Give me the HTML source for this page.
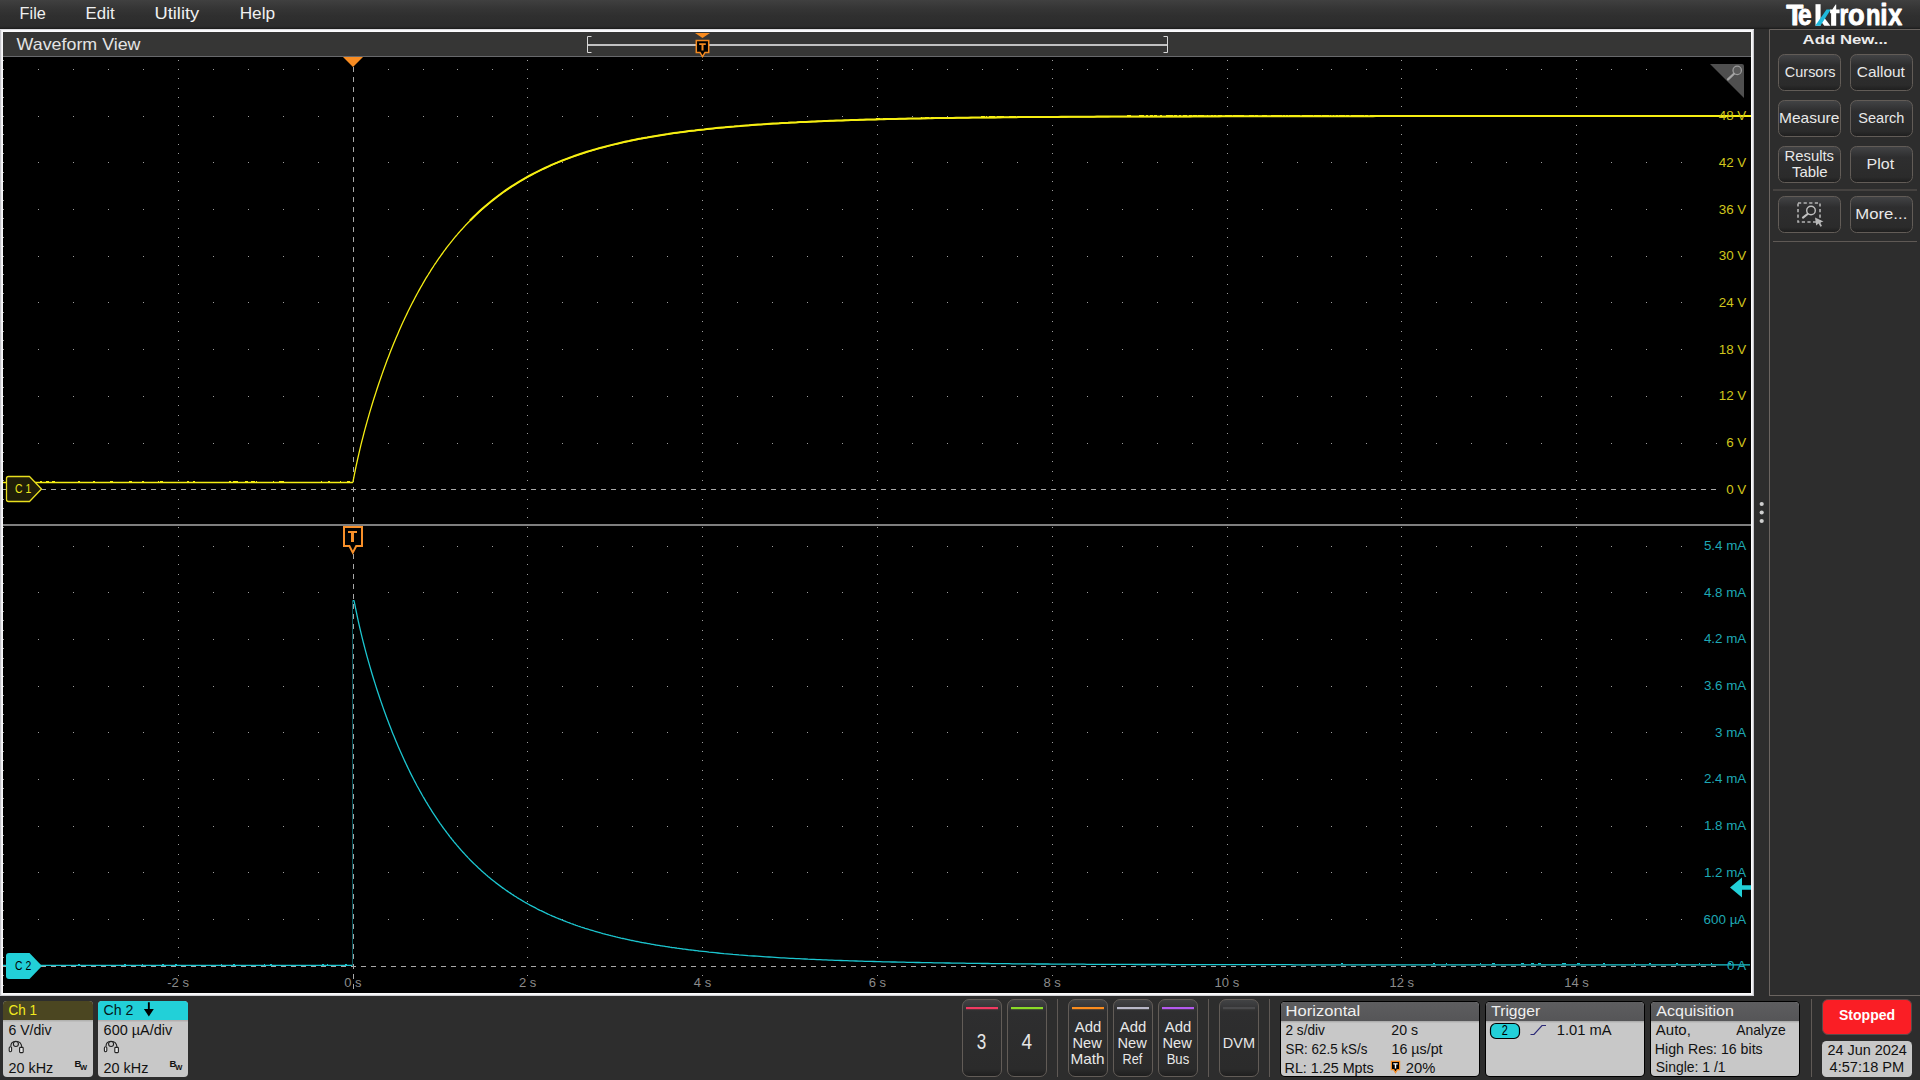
<!DOCTYPE html>
<html><head><meta charset="utf-8"><title>Tektronix Oscilloscope</title>
<style>
html,body{margin:0;padding:0;background:#2d2d2d;}
body{width:1920px;height:1080px;overflow:hidden;position:relative;font-family:"Liberation Sans", sans-serif;}
svg{position:absolute;left:0;top:0;display:block}
text{font-family:"Liberation Sans", sans-serif;white-space:pre}
</style></head><body>
<svg width="1920" height="1080" viewBox="0 0 1920 1080">
<defs>
<linearGradient id="gMenu" x1="0" y1="0" x2="0" y2="1"><stop offset="0" stop-color="#404040"/><stop offset="0.3" stop-color="#353535"/><stop offset="0.55" stop-color="#2f2f2f"/><stop offset="0.9" stop-color="#2d2d2d"/><stop offset="0.96" stop-color="#242424"/><stop offset="1" stop-color="#1a1a1a"/></linearGradient>
<linearGradient id="gBtn" x1="0" y1="0" x2="0" y2="1"><stop offset="0" stop-color="#434446"/><stop offset="0.3" stop-color="#2e2e2f"/><stop offset="0.85" stop-color="#2b2b2b"/><stop offset="1" stop-color="#1e1e1e"/></linearGradient>
<linearGradient id="gBtnT" x1="0" y1="0" x2="0" y2="1"><stop offset="0" stop-color="#434446"/><stop offset="0.16" stop-color="#2e2e2f"/><stop offset="0.9" stop-color="#2b2b2b"/><stop offset="1" stop-color="#1e1e1e"/></linearGradient>
<linearGradient id="gHdr" x1="0" y1="0" x2="0" y2="1"><stop offset="0" stop-color="#5e5e60"/><stop offset="1" stop-color="#555557"/></linearGradient>
<linearGradient id="gBordH" x1="0" y1="0" x2="0" y2="1"><stop offset="0" stop-color="#c9c9cc"/><stop offset="0.34" stop-color="#f4f4f7"/><stop offset="1" stop-color="#ffffff"/></linearGradient>
<linearGradient id="gBordHB" x1="0" y1="0" x2="0" y2="1"><stop offset="0" stop-color="#ffffff"/><stop offset="0.66" stop-color="#f0f0f3"/><stop offset="1" stop-color="#b4b4b8"/></linearGradient>
<linearGradient id="gBordL" x1="0" y1="0" x2="1" y2="0"><stop offset="0" stop-color="#a8a8ad"/><stop offset="0.34" stop-color="#e8e8ec"/><stop offset="1" stop-color="#ffffff"/></linearGradient>
<linearGradient id="gBordR" x1="0" y1="0" x2="1" y2="0"><stop offset="0" stop-color="#ffffff"/><stop offset="0.66" stop-color="#e8e8ec"/><stop offset="1" stop-color="#a8a8ad"/></linearGradient>
<clipPath id="cpPlot"><rect x="3" y="57" width="1748" height="936"/></clipPath>
</defs>

<rect x="0" y="0" width="1920" height="1080" fill="#2d2d2d"/>
<rect x="0" y="0" width="1920" height="29" fill="url(#gMenu)"/>
<text x="19.62" y="19" font-size="16.5" fill="#f0f0f0" text-anchor="start" font-weight="normal" textLength="26.2" lengthAdjust="spacingAndGlyphs">File</text>
<text x="85.58" y="19" font-size="16.5" fill="#f0f0f0" text-anchor="start" font-weight="normal" textLength="29.0" lengthAdjust="spacingAndGlyphs">Edit</text>
<text x="154.49" y="19" font-size="16.5" fill="#f0f0f0" text-anchor="start" font-weight="normal" textLength="44.7" lengthAdjust="spacingAndGlyphs">Utility</text>
<text x="239.65" y="19" font-size="16.5" fill="#f0f0f0" text-anchor="start" font-weight="normal" textLength="35.5" lengthAdjust="spacingAndGlyphs">Help</text>
<rect x="0" y="29" width="1754" height="967" fill="#fff"/>
<rect x="0" y="29" width="1754" height="3" fill="url(#gBordH)"/>
<rect x="0" y="993" width="1754" height="3" fill="url(#gBordHB)"/>
<rect x="0" y="30" width="3" height="965" fill="url(#gBordL)"/>
<rect x="1751" y="30" width="3" height="965" fill="url(#gBordR)"/>
<rect x="3" y="32" width="1748" height="24" fill="#363635"/>
<rect x="3" y="56" width="1748" height="1" fill="#68696c"/>
<rect x="3" y="57" width="1748" height="936" fill="#000"/>
<text x="16.6" y="50" font-size="17" fill="#e4e4e4" text-anchor="start" font-weight="normal" textLength="123.9" lengthAdjust="spacingAndGlyphs">Waveform View</text>
<path d="M591.5 36.5H587.5V52.5H591.5M1163.5 36.5H1167.5V52.5H1163.5" fill="none" stroke="#d8d8d8" stroke-width="1"/>
<rect x="588" y="44" width="579" height="2" fill="#c2c2c2"/>
<path d="M695 33H710L702.5 38Z" fill="#fa8c1e"/>
<path d="M696.3 40.5H708.7V52.4H705L702.5 56.6L700 52.4H696.3Z" fill="#000" stroke="#f58a1f" stroke-width="1.5" stroke-linejoin="miter"/>
<path d="M699.2 43.2H705.8V45H703.5V50.6H701.5V45H699.2Z" fill="#f58a1f"/>
<path clip-path="url(#cpPlot)" shape-rendering="crispEdges" stroke="#9e9e9e" stroke-width="1" fill="none" d="M3 517.5h1M178 517.5h1M527 517.5h1M702 517.5h1M877 517.5h1M1052 517.5h1M1227 517.5h1M1401 517.5h1M1576 517.5h1M3 508.5h1M178 508.5h1M527 508.5h1M702 508.5h1M877 508.5h1M1052 508.5h1M1227 508.5h1M1401 508.5h1M1576 508.5h1M3 499.5h1M178 499.5h1M527 499.5h1M702 499.5h1M877 499.5h1M1052 499.5h1M1227 499.5h1M1401 499.5h1M1576 499.5h1M3 489.5h1M3 480.5h1M178 480.5h1M527 480.5h1M702 480.5h1M877 480.5h1M1052 480.5h1M1227 480.5h1M1401 480.5h1M1576 480.5h1M3 471.5h1M178 471.5h1M527 471.5h1M702 471.5h1M877 471.5h1M1052 471.5h1M1227 471.5h1M1401 471.5h1M1576 471.5h1M3 461.5h1M178 461.5h1M527 461.5h1M702 461.5h1M877 461.5h1M1052 461.5h1M1227 461.5h1M1401 461.5h1M1576 461.5h1M3 452.5h1M178 452.5h1M527 452.5h1M702 452.5h1M877 452.5h1M1052 452.5h1M1227 452.5h1M1401 452.5h1M1576 452.5h1M3 443.5h1M178 443.5h1M527 443.5h1M702 443.5h1M877 443.5h1M1052 443.5h1M1227 443.5h1M1401 443.5h1M1576 443.5h1M38 443.5h1M73 443.5h1M108 443.5h1M143 443.5h1M213 443.5h1M248 443.5h1M283 443.5h1M318 443.5h1M388 443.5h1M423 443.5h1M457 443.5h1M492 443.5h1M562 443.5h1M597 443.5h1M632 443.5h1M667 443.5h1M737 443.5h1M772 443.5h1M807 443.5h1M842 443.5h1M912 443.5h1M947 443.5h1M982 443.5h1M1017 443.5h1M1087 443.5h1M1122 443.5h1M1157 443.5h1M1192 443.5h1M1262 443.5h1M1297 443.5h1M1331 443.5h1M1366 443.5h1M1436 443.5h1M1471 443.5h1M1506 443.5h1M1541 443.5h1M1611 443.5h1M1646 443.5h1M1681 443.5h1M1716 443.5h1M3 433.5h1M178 433.5h1M527 433.5h1M702 433.5h1M877 433.5h1M1052 433.5h1M1227 433.5h1M1401 433.5h1M1576 433.5h1M3 424.5h1M178 424.5h1M527 424.5h1M702 424.5h1M877 424.5h1M1052 424.5h1M1227 424.5h1M1401 424.5h1M1576 424.5h1M3 415.5h1M178 415.5h1M527 415.5h1M702 415.5h1M877 415.5h1M1052 415.5h1M1227 415.5h1M1401 415.5h1M1576 415.5h1M3 405.5h1M178 405.5h1M527 405.5h1M702 405.5h1M877 405.5h1M1052 405.5h1M1227 405.5h1M1401 405.5h1M1576 405.5h1M3 396.5h1M178 396.5h1M527 396.5h1M702 396.5h1M877 396.5h1M1052 396.5h1M1227 396.5h1M1401 396.5h1M1576 396.5h1M38 396.5h1M73 396.5h1M108 396.5h1M143 396.5h1M213 396.5h1M248 396.5h1M283 396.5h1M318 396.5h1M388 396.5h1M423 396.5h1M457 396.5h1M492 396.5h1M562 396.5h1M597 396.5h1M632 396.5h1M667 396.5h1M737 396.5h1M772 396.5h1M807 396.5h1M842 396.5h1M912 396.5h1M947 396.5h1M982 396.5h1M1017 396.5h1M1087 396.5h1M1122 396.5h1M1157 396.5h1M1192 396.5h1M1262 396.5h1M1297 396.5h1M1331 396.5h1M1366 396.5h1M1436 396.5h1M1471 396.5h1M1506 396.5h1M1541 396.5h1M1611 396.5h1M1646 396.5h1M1681 396.5h1M1716 396.5h1M3 387.5h1M178 387.5h1M527 387.5h1M702 387.5h1M877 387.5h1M1052 387.5h1M1227 387.5h1M1401 387.5h1M1576 387.5h1M3 377.5h1M178 377.5h1M527 377.5h1M702 377.5h1M877 377.5h1M1052 377.5h1M1227 377.5h1M1401 377.5h1M1576 377.5h1M3 368.5h1M178 368.5h1M527 368.5h1M702 368.5h1M877 368.5h1M1052 368.5h1M1227 368.5h1M1401 368.5h1M1576 368.5h1M3 359.5h1M178 359.5h1M527 359.5h1M702 359.5h1M877 359.5h1M1052 359.5h1M1227 359.5h1M1401 359.5h1M1576 359.5h1M3 349.5h1M178 349.5h1M527 349.5h1M702 349.5h1M877 349.5h1M1052 349.5h1M1227 349.5h1M1401 349.5h1M1576 349.5h1M38 349.5h1M73 349.5h1M108 349.5h1M143 349.5h1M213 349.5h1M248 349.5h1M283 349.5h1M318 349.5h1M388 349.5h1M423 349.5h1M457 349.5h1M492 349.5h1M562 349.5h1M597 349.5h1M632 349.5h1M667 349.5h1M737 349.5h1M772 349.5h1M807 349.5h1M842 349.5h1M912 349.5h1M947 349.5h1M982 349.5h1M1017 349.5h1M1087 349.5h1M1122 349.5h1M1157 349.5h1M1192 349.5h1M1262 349.5h1M1297 349.5h1M1331 349.5h1M1366 349.5h1M1436 349.5h1M1471 349.5h1M1506 349.5h1M1541 349.5h1M1611 349.5h1M1646 349.5h1M1681 349.5h1M1716 349.5h1M3 340.5h1M178 340.5h1M527 340.5h1M702 340.5h1M877 340.5h1M1052 340.5h1M1227 340.5h1M1401 340.5h1M1576 340.5h1M3 331.5h1M178 331.5h1M527 331.5h1M702 331.5h1M877 331.5h1M1052 331.5h1M1227 331.5h1M1401 331.5h1M1576 331.5h1M3 321.5h1M178 321.5h1M527 321.5h1M702 321.5h1M877 321.5h1M1052 321.5h1M1227 321.5h1M1401 321.5h1M1576 321.5h1M3 312.5h1M178 312.5h1M527 312.5h1M702 312.5h1M877 312.5h1M1052 312.5h1M1227 312.5h1M1401 312.5h1M1576 312.5h1M3 302.5h1M178 302.5h1M527 302.5h1M702 302.5h1M877 302.5h1M1052 302.5h1M1227 302.5h1M1401 302.5h1M1576 302.5h1M38 302.5h1M73 302.5h1M108 302.5h1M143 302.5h1M213 302.5h1M248 302.5h1M283 302.5h1M318 302.5h1M388 302.5h1M423 302.5h1M457 302.5h1M492 302.5h1M562 302.5h1M597 302.5h1M632 302.5h1M667 302.5h1M737 302.5h1M772 302.5h1M807 302.5h1M842 302.5h1M912 302.5h1M947 302.5h1M982 302.5h1M1017 302.5h1M1087 302.5h1M1122 302.5h1M1157 302.5h1M1192 302.5h1M1262 302.5h1M1297 302.5h1M1331 302.5h1M1366 302.5h1M1436 302.5h1M1471 302.5h1M1506 302.5h1M1541 302.5h1M1611 302.5h1M1646 302.5h1M1681 302.5h1M1716 302.5h1M3 293.5h1M178 293.5h1M527 293.5h1M702 293.5h1M877 293.5h1M1052 293.5h1M1227 293.5h1M1401 293.5h1M1576 293.5h1M3 284.5h1M178 284.5h1M527 284.5h1M702 284.5h1M877 284.5h1M1052 284.5h1M1227 284.5h1M1401 284.5h1M1576 284.5h1M3 274.5h1M178 274.5h1M527 274.5h1M702 274.5h1M877 274.5h1M1052 274.5h1M1227 274.5h1M1401 274.5h1M1576 274.5h1M3 265.5h1M178 265.5h1M527 265.5h1M702 265.5h1M877 265.5h1M1052 265.5h1M1227 265.5h1M1401 265.5h1M1576 265.5h1M3 256.5h1M178 256.5h1M527 256.5h1M702 256.5h1M877 256.5h1M1052 256.5h1M1227 256.5h1M1401 256.5h1M1576 256.5h1M38 256.5h1M73 256.5h1M108 256.5h1M143 256.5h1M213 256.5h1M248 256.5h1M283 256.5h1M318 256.5h1M388 256.5h1M423 256.5h1M457 256.5h1M492 256.5h1M562 256.5h1M597 256.5h1M632 256.5h1M667 256.5h1M737 256.5h1M772 256.5h1M807 256.5h1M842 256.5h1M912 256.5h1M947 256.5h1M982 256.5h1M1017 256.5h1M1087 256.5h1M1122 256.5h1M1157 256.5h1M1192 256.5h1M1262 256.5h1M1297 256.5h1M1331 256.5h1M1366 256.5h1M1436 256.5h1M1471 256.5h1M1506 256.5h1M1541 256.5h1M1611 256.5h1M1646 256.5h1M1681 256.5h1M1716 256.5h1M3 246.5h1M178 246.5h1M527 246.5h1M702 246.5h1M877 246.5h1M1052 246.5h1M1227 246.5h1M1401 246.5h1M1576 246.5h1M3 237.5h1M178 237.5h1M527 237.5h1M702 237.5h1M877 237.5h1M1052 237.5h1M1227 237.5h1M1401 237.5h1M1576 237.5h1M3 228.5h1M178 228.5h1M527 228.5h1M702 228.5h1M877 228.5h1M1052 228.5h1M1227 228.5h1M1401 228.5h1M1576 228.5h1M3 218.5h1M178 218.5h1M527 218.5h1M702 218.5h1M877 218.5h1M1052 218.5h1M1227 218.5h1M1401 218.5h1M1576 218.5h1M3 209.5h1M178 209.5h1M527 209.5h1M702 209.5h1M877 209.5h1M1052 209.5h1M1227 209.5h1M1401 209.5h1M1576 209.5h1M38 209.5h1M73 209.5h1M108 209.5h1M143 209.5h1M213 209.5h1M248 209.5h1M283 209.5h1M318 209.5h1M388 209.5h1M423 209.5h1M457 209.5h1M492 209.5h1M562 209.5h1M597 209.5h1M632 209.5h1M667 209.5h1M737 209.5h1M772 209.5h1M807 209.5h1M842 209.5h1M912 209.5h1M947 209.5h1M982 209.5h1M1017 209.5h1M1087 209.5h1M1122 209.5h1M1157 209.5h1M1192 209.5h1M1262 209.5h1M1297 209.5h1M1331 209.5h1M1366 209.5h1M1436 209.5h1M1471 209.5h1M1506 209.5h1M1541 209.5h1M1611 209.5h1M1646 209.5h1M1681 209.5h1M1716 209.5h1M3 200.5h1M178 200.5h1M527 200.5h1M702 200.5h1M877 200.5h1M1052 200.5h1M1227 200.5h1M1401 200.5h1M1576 200.5h1M3 190.5h1M178 190.5h1M527 190.5h1M702 190.5h1M877 190.5h1M1052 190.5h1M1227 190.5h1M1401 190.5h1M1576 190.5h1M3 181.5h1M178 181.5h1M527 181.5h1M702 181.5h1M877 181.5h1M1052 181.5h1M1227 181.5h1M1401 181.5h1M1576 181.5h1M3 172.5h1M178 172.5h1M527 172.5h1M702 172.5h1M877 172.5h1M1052 172.5h1M1227 172.5h1M1401 172.5h1M1576 172.5h1M3 162.5h1M178 162.5h1M527 162.5h1M702 162.5h1M877 162.5h1M1052 162.5h1M1227 162.5h1M1401 162.5h1M1576 162.5h1M38 162.5h1M73 162.5h1M108 162.5h1M143 162.5h1M213 162.5h1M248 162.5h1M283 162.5h1M318 162.5h1M388 162.5h1M423 162.5h1M457 162.5h1M492 162.5h1M562 162.5h1M597 162.5h1M632 162.5h1M667 162.5h1M737 162.5h1M772 162.5h1M807 162.5h1M842 162.5h1M912 162.5h1M947 162.5h1M982 162.5h1M1017 162.5h1M1087 162.5h1M1122 162.5h1M1157 162.5h1M1192 162.5h1M1262 162.5h1M1297 162.5h1M1331 162.5h1M1366 162.5h1M1436 162.5h1M1471 162.5h1M1506 162.5h1M1541 162.5h1M1611 162.5h1M1646 162.5h1M1681 162.5h1M1716 162.5h1M3 153.5h1M178 153.5h1M527 153.5h1M702 153.5h1M877 153.5h1M1052 153.5h1M1227 153.5h1M1401 153.5h1M1576 153.5h1M3 144.5h1M178 144.5h1M527 144.5h1M702 144.5h1M877 144.5h1M1052 144.5h1M1227 144.5h1M1401 144.5h1M1576 144.5h1M3 134.5h1M178 134.5h1M527 134.5h1M702 134.5h1M877 134.5h1M1052 134.5h1M1227 134.5h1M1401 134.5h1M1576 134.5h1M3 125.5h1M178 125.5h1M527 125.5h1M702 125.5h1M877 125.5h1M1052 125.5h1M1227 125.5h1M1401 125.5h1M1576 125.5h1M3 116.5h1M178 116.5h1M527 116.5h1M702 116.5h1M877 116.5h1M1052 116.5h1M1227 116.5h1M1401 116.5h1M1576 116.5h1M38 116.5h1M73 116.5h1M108 116.5h1M143 116.5h1M213 116.5h1M248 116.5h1M283 116.5h1M318 116.5h1M388 116.5h1M423 116.5h1M457 116.5h1M492 116.5h1M562 116.5h1M597 116.5h1M632 116.5h1M667 116.5h1M737 116.5h1M772 116.5h1M807 116.5h1M842 116.5h1M912 116.5h1M947 116.5h1M982 116.5h1M1017 116.5h1M1087 116.5h1M1122 116.5h1M1157 116.5h1M1192 116.5h1M1262 116.5h1M1297 116.5h1M1331 116.5h1M1366 116.5h1M1436 116.5h1M1471 116.5h1M1506 116.5h1M1541 116.5h1M1611 116.5h1M1646 116.5h1M1681 116.5h1M1716 116.5h1M3 106.5h1M178 106.5h1M527 106.5h1M702 106.5h1M877 106.5h1M1052 106.5h1M1227 106.5h1M1401 106.5h1M1576 106.5h1M3 97.5h1M178 97.5h1M527 97.5h1M702 97.5h1M877 97.5h1M1052 97.5h1M1227 97.5h1M1401 97.5h1M1576 97.5h1M3 88.5h1M178 88.5h1M527 88.5h1M702 88.5h1M877 88.5h1M1052 88.5h1M1227 88.5h1M1401 88.5h1M1576 88.5h1M3 78.5h1M178 78.5h1M527 78.5h1M702 78.5h1M877 78.5h1M1052 78.5h1M1227 78.5h1M1401 78.5h1M1576 78.5h1M3 69.5h1M178 69.5h1M527 69.5h1M702 69.5h1M877 69.5h1M1052 69.5h1M1227 69.5h1M1401 69.5h1M1576 69.5h1M38 69.5h1M73 69.5h1M108 69.5h1M143 69.5h1M213 69.5h1M248 69.5h1M283 69.5h1M318 69.5h1M388 69.5h1M423 69.5h1M457 69.5h1M492 69.5h1M562 69.5h1M597 69.5h1M632 69.5h1M667 69.5h1M737 69.5h1M772 69.5h1M807 69.5h1M842 69.5h1M912 69.5h1M947 69.5h1M982 69.5h1M1017 69.5h1M1087 69.5h1M1122 69.5h1M1157 69.5h1M1192 69.5h1M1262 69.5h1M1297 69.5h1M1331 69.5h1M1366 69.5h1M1436 69.5h1M1471 69.5h1M1506 69.5h1M1541 69.5h1M1611 69.5h1M1646 69.5h1M1681 69.5h1M1716 69.5h1M3 60.5h1M178 60.5h1M527 60.5h1M702 60.5h1M877 60.5h1M1052 60.5h1M1227 60.5h1M1401 60.5h1M1576 60.5h1M3 985.5h1M178 985.5h1M527 985.5h1M702 985.5h1M877 985.5h1M1052 985.5h1M1227 985.5h1M1401 985.5h1M1576 985.5h1M3 975.5h1M178 975.5h1M527 975.5h1M702 975.5h1M877 975.5h1M1052 975.5h1M1227 975.5h1M1401 975.5h1M1576 975.5h1M3 966.5h1M3 957.5h1M178 957.5h1M527 957.5h1M702 957.5h1M877 957.5h1M1052 957.5h1M1227 957.5h1M1401 957.5h1M1576 957.5h1M3 947.5h1M178 947.5h1M527 947.5h1M702 947.5h1M877 947.5h1M1052 947.5h1M1227 947.5h1M1401 947.5h1M1576 947.5h1M3 938.5h1M178 938.5h1M527 938.5h1M702 938.5h1M877 938.5h1M1052 938.5h1M1227 938.5h1M1401 938.5h1M1576 938.5h1M3 929.5h1M178 929.5h1M527 929.5h1M702 929.5h1M877 929.5h1M1052 929.5h1M1227 929.5h1M1401 929.5h1M1576 929.5h1M3 919.5h1M178 919.5h1M527 919.5h1M702 919.5h1M877 919.5h1M1052 919.5h1M1227 919.5h1M1401 919.5h1M1576 919.5h1M38 919.5h1M73 919.5h1M108 919.5h1M143 919.5h1M213 919.5h1M248 919.5h1M283 919.5h1M318 919.5h1M388 919.5h1M423 919.5h1M457 919.5h1M492 919.5h1M562 919.5h1M597 919.5h1M632 919.5h1M667 919.5h1M737 919.5h1M772 919.5h1M807 919.5h1M842 919.5h1M912 919.5h1M947 919.5h1M982 919.5h1M1017 919.5h1M1087 919.5h1M1122 919.5h1M1157 919.5h1M1192 919.5h1M1262 919.5h1M1297 919.5h1M1331 919.5h1M1366 919.5h1M1436 919.5h1M1471 919.5h1M1506 919.5h1M1541 919.5h1M1611 919.5h1M1646 919.5h1M1681 919.5h1M1716 919.5h1M3 910.5h1M178 910.5h1M527 910.5h1M702 910.5h1M877 910.5h1M1052 910.5h1M1227 910.5h1M1401 910.5h1M1576 910.5h1M3 901.5h1M178 901.5h1M527 901.5h1M702 901.5h1M877 901.5h1M1052 901.5h1M1227 901.5h1M1401 901.5h1M1576 901.5h1M3 891.5h1M178 891.5h1M527 891.5h1M702 891.5h1M877 891.5h1M1052 891.5h1M1227 891.5h1M1401 891.5h1M1576 891.5h1M3 882.5h1M178 882.5h1M527 882.5h1M702 882.5h1M877 882.5h1M1052 882.5h1M1227 882.5h1M1401 882.5h1M1576 882.5h1M3 872.5h1M178 872.5h1M527 872.5h1M702 872.5h1M877 872.5h1M1052 872.5h1M1227 872.5h1M1401 872.5h1M1576 872.5h1M38 872.5h1M73 872.5h1M108 872.5h1M143 872.5h1M213 872.5h1M248 872.5h1M283 872.5h1M318 872.5h1M388 872.5h1M423 872.5h1M457 872.5h1M492 872.5h1M562 872.5h1M597 872.5h1M632 872.5h1M667 872.5h1M737 872.5h1M772 872.5h1M807 872.5h1M842 872.5h1M912 872.5h1M947 872.5h1M982 872.5h1M1017 872.5h1M1087 872.5h1M1122 872.5h1M1157 872.5h1M1192 872.5h1M1262 872.5h1M1297 872.5h1M1331 872.5h1M1366 872.5h1M1436 872.5h1M1471 872.5h1M1506 872.5h1M1541 872.5h1M1611 872.5h1M1646 872.5h1M1681 872.5h1M1716 872.5h1M3 863.5h1M178 863.5h1M527 863.5h1M702 863.5h1M877 863.5h1M1052 863.5h1M1227 863.5h1M1401 863.5h1M1576 863.5h1M3 854.5h1M178 854.5h1M527 854.5h1M702 854.5h1M877 854.5h1M1052 854.5h1M1227 854.5h1M1401 854.5h1M1576 854.5h1M3 844.5h1M178 844.5h1M527 844.5h1M702 844.5h1M877 844.5h1M1052 844.5h1M1227 844.5h1M1401 844.5h1M1576 844.5h1M3 835.5h1M178 835.5h1M527 835.5h1M702 835.5h1M877 835.5h1M1052 835.5h1M1227 835.5h1M1401 835.5h1M1576 835.5h1M3 826.5h1M178 826.5h1M527 826.5h1M702 826.5h1M877 826.5h1M1052 826.5h1M1227 826.5h1M1401 826.5h1M1576 826.5h1M38 826.5h1M73 826.5h1M108 826.5h1M143 826.5h1M213 826.5h1M248 826.5h1M283 826.5h1M318 826.5h1M388 826.5h1M423 826.5h1M457 826.5h1M492 826.5h1M562 826.5h1M597 826.5h1M632 826.5h1M667 826.5h1M737 826.5h1M772 826.5h1M807 826.5h1M842 826.5h1M912 826.5h1M947 826.5h1M982 826.5h1M1017 826.5h1M1087 826.5h1M1122 826.5h1M1157 826.5h1M1192 826.5h1M1262 826.5h1M1297 826.5h1M1331 826.5h1M1366 826.5h1M1436 826.5h1M1471 826.5h1M1506 826.5h1M1541 826.5h1M1611 826.5h1M1646 826.5h1M1681 826.5h1M1716 826.5h1M3 816.5h1M178 816.5h1M527 816.5h1M702 816.5h1M877 816.5h1M1052 816.5h1M1227 816.5h1M1401 816.5h1M1576 816.5h1M3 807.5h1M178 807.5h1M527 807.5h1M702 807.5h1M877 807.5h1M1052 807.5h1M1227 807.5h1M1401 807.5h1M1576 807.5h1M3 798.5h1M178 798.5h1M527 798.5h1M702 798.5h1M877 798.5h1M1052 798.5h1M1227 798.5h1M1401 798.5h1M1576 798.5h1M3 788.5h1M178 788.5h1M527 788.5h1M702 788.5h1M877 788.5h1M1052 788.5h1M1227 788.5h1M1401 788.5h1M1576 788.5h1M3 779.5h1M178 779.5h1M527 779.5h1M702 779.5h1M877 779.5h1M1052 779.5h1M1227 779.5h1M1401 779.5h1M1576 779.5h1M38 779.5h1M73 779.5h1M108 779.5h1M143 779.5h1M213 779.5h1M248 779.5h1M283 779.5h1M318 779.5h1M388 779.5h1M423 779.5h1M457 779.5h1M492 779.5h1M562 779.5h1M597 779.5h1M632 779.5h1M667 779.5h1M737 779.5h1M772 779.5h1M807 779.5h1M842 779.5h1M912 779.5h1M947 779.5h1M982 779.5h1M1017 779.5h1M1087 779.5h1M1122 779.5h1M1157 779.5h1M1192 779.5h1M1262 779.5h1M1297 779.5h1M1331 779.5h1M1366 779.5h1M1436 779.5h1M1471 779.5h1M1506 779.5h1M1541 779.5h1M1611 779.5h1M1646 779.5h1M1681 779.5h1M1716 779.5h1M3 770.5h1M178 770.5h1M527 770.5h1M702 770.5h1M877 770.5h1M1052 770.5h1M1227 770.5h1M1401 770.5h1M1576 770.5h1M3 760.5h1M178 760.5h1M527 760.5h1M702 760.5h1M877 760.5h1M1052 760.5h1M1227 760.5h1M1401 760.5h1M1576 760.5h1M3 751.5h1M178 751.5h1M527 751.5h1M702 751.5h1M877 751.5h1M1052 751.5h1M1227 751.5h1M1401 751.5h1M1576 751.5h1M3 742.5h1M178 742.5h1M527 742.5h1M702 742.5h1M877 742.5h1M1052 742.5h1M1227 742.5h1M1401 742.5h1M1576 742.5h1M3 732.5h1M178 732.5h1M527 732.5h1M702 732.5h1M877 732.5h1M1052 732.5h1M1227 732.5h1M1401 732.5h1M1576 732.5h1M38 732.5h1M73 732.5h1M108 732.5h1M143 732.5h1M213 732.5h1M248 732.5h1M283 732.5h1M318 732.5h1M388 732.5h1M423 732.5h1M457 732.5h1M492 732.5h1M562 732.5h1M597 732.5h1M632 732.5h1M667 732.5h1M737 732.5h1M772 732.5h1M807 732.5h1M842 732.5h1M912 732.5h1M947 732.5h1M982 732.5h1M1017 732.5h1M1087 732.5h1M1122 732.5h1M1157 732.5h1M1192 732.5h1M1262 732.5h1M1297 732.5h1M1331 732.5h1M1366 732.5h1M1436 732.5h1M1471 732.5h1M1506 732.5h1M1541 732.5h1M1611 732.5h1M1646 732.5h1M1681 732.5h1M1716 732.5h1M3 723.5h1M178 723.5h1M527 723.5h1M702 723.5h1M877 723.5h1M1052 723.5h1M1227 723.5h1M1401 723.5h1M1576 723.5h1M3 714.5h1M178 714.5h1M527 714.5h1M702 714.5h1M877 714.5h1M1052 714.5h1M1227 714.5h1M1401 714.5h1M1576 714.5h1M3 704.5h1M178 704.5h1M527 704.5h1M702 704.5h1M877 704.5h1M1052 704.5h1M1227 704.5h1M1401 704.5h1M1576 704.5h1M3 695.5h1M178 695.5h1M527 695.5h1M702 695.5h1M877 695.5h1M1052 695.5h1M1227 695.5h1M1401 695.5h1M1576 695.5h1M3 686.5h1M178 686.5h1M527 686.5h1M702 686.5h1M877 686.5h1M1052 686.5h1M1227 686.5h1M1401 686.5h1M1576 686.5h1M38 686.5h1M73 686.5h1M108 686.5h1M143 686.5h1M213 686.5h1M248 686.5h1M283 686.5h1M318 686.5h1M388 686.5h1M423 686.5h1M457 686.5h1M492 686.5h1M562 686.5h1M597 686.5h1M632 686.5h1M667 686.5h1M737 686.5h1M772 686.5h1M807 686.5h1M842 686.5h1M912 686.5h1M947 686.5h1M982 686.5h1M1017 686.5h1M1087 686.5h1M1122 686.5h1M1157 686.5h1M1192 686.5h1M1262 686.5h1M1297 686.5h1M1331 686.5h1M1366 686.5h1M1436 686.5h1M1471 686.5h1M1506 686.5h1M1541 686.5h1M1611 686.5h1M1646 686.5h1M1681 686.5h1M1716 686.5h1M3 676.5h1M178 676.5h1M527 676.5h1M702 676.5h1M877 676.5h1M1052 676.5h1M1227 676.5h1M1401 676.5h1M1576 676.5h1M3 667.5h1M178 667.5h1M527 667.5h1M702 667.5h1M877 667.5h1M1052 667.5h1M1227 667.5h1M1401 667.5h1M1576 667.5h1M3 658.5h1M178 658.5h1M527 658.5h1M702 658.5h1M877 658.5h1M1052 658.5h1M1227 658.5h1M1401 658.5h1M1576 658.5h1M3 648.5h1M178 648.5h1M527 648.5h1M702 648.5h1M877 648.5h1M1052 648.5h1M1227 648.5h1M1401 648.5h1M1576 648.5h1M3 639.5h1M178 639.5h1M527 639.5h1M702 639.5h1M877 639.5h1M1052 639.5h1M1227 639.5h1M1401 639.5h1M1576 639.5h1M38 639.5h1M73 639.5h1M108 639.5h1M143 639.5h1M213 639.5h1M248 639.5h1M283 639.5h1M318 639.5h1M388 639.5h1M423 639.5h1M457 639.5h1M492 639.5h1M562 639.5h1M597 639.5h1M632 639.5h1M667 639.5h1M737 639.5h1M772 639.5h1M807 639.5h1M842 639.5h1M912 639.5h1M947 639.5h1M982 639.5h1M1017 639.5h1M1087 639.5h1M1122 639.5h1M1157 639.5h1M1192 639.5h1M1262 639.5h1M1297 639.5h1M1331 639.5h1M1366 639.5h1M1436 639.5h1M1471 639.5h1M1506 639.5h1M1541 639.5h1M1611 639.5h1M1646 639.5h1M1681 639.5h1M1716 639.5h1M3 630.5h1M178 630.5h1M527 630.5h1M702 630.5h1M877 630.5h1M1052 630.5h1M1227 630.5h1M1401 630.5h1M1576 630.5h1M3 620.5h1M178 620.5h1M527 620.5h1M702 620.5h1M877 620.5h1M1052 620.5h1M1227 620.5h1M1401 620.5h1M1576 620.5h1M3 611.5h1M178 611.5h1M527 611.5h1M702 611.5h1M877 611.5h1M1052 611.5h1M1227 611.5h1M1401 611.5h1M1576 611.5h1M3 602.5h1M178 602.5h1M527 602.5h1M702 602.5h1M877 602.5h1M1052 602.5h1M1227 602.5h1M1401 602.5h1M1576 602.5h1M3 592.5h1M178 592.5h1M527 592.5h1M702 592.5h1M877 592.5h1M1052 592.5h1M1227 592.5h1M1401 592.5h1M1576 592.5h1M38 592.5h1M73 592.5h1M108 592.5h1M143 592.5h1M213 592.5h1M248 592.5h1M283 592.5h1M318 592.5h1M388 592.5h1M423 592.5h1M457 592.5h1M492 592.5h1M562 592.5h1M597 592.5h1M632 592.5h1M667 592.5h1M737 592.5h1M772 592.5h1M807 592.5h1M842 592.5h1M912 592.5h1M947 592.5h1M982 592.5h1M1017 592.5h1M1087 592.5h1M1122 592.5h1M1157 592.5h1M1192 592.5h1M1262 592.5h1M1297 592.5h1M1331 592.5h1M1366 592.5h1M1436 592.5h1M1471 592.5h1M1506 592.5h1M1541 592.5h1M1611 592.5h1M1646 592.5h1M1681 592.5h1M1716 592.5h1M3 583.5h1M178 583.5h1M527 583.5h1M702 583.5h1M877 583.5h1M1052 583.5h1M1227 583.5h1M1401 583.5h1M1576 583.5h1M3 574.5h1M178 574.5h1M527 574.5h1M702 574.5h1M877 574.5h1M1052 574.5h1M1227 574.5h1M1401 574.5h1M1576 574.5h1M3 564.5h1M178 564.5h1M527 564.5h1M702 564.5h1M877 564.5h1M1052 564.5h1M1227 564.5h1M1401 564.5h1M1576 564.5h1M3 555.5h1M178 555.5h1M527 555.5h1M702 555.5h1M877 555.5h1M1052 555.5h1M1227 555.5h1M1401 555.5h1M1576 555.5h1M3 546.5h1M178 546.5h1M527 546.5h1M702 546.5h1M877 546.5h1M1052 546.5h1M1227 546.5h1M1401 546.5h1M1576 546.5h1M38 546.5h1M73 546.5h1M108 546.5h1M143 546.5h1M213 546.5h1M248 546.5h1M283 546.5h1M318 546.5h1M388 546.5h1M423 546.5h1M457 546.5h1M492 546.5h1M562 546.5h1M597 546.5h1M632 546.5h1M667 546.5h1M737 546.5h1M772 546.5h1M807 546.5h1M842 546.5h1M912 546.5h1M947 546.5h1M982 546.5h1M1017 546.5h1M1087 546.5h1M1122 546.5h1M1157 546.5h1M1192 546.5h1M1262 546.5h1M1297 546.5h1M1331 546.5h1M1366 546.5h1M1436 546.5h1M1471 546.5h1M1506 546.5h1M1541 546.5h1M1611 546.5h1M1646 546.5h1M1681 546.5h1M1716 546.5h1M3 536.5h1M178 536.5h1M527 536.5h1M702 536.5h1M877 536.5h1M1052 536.5h1M1227 536.5h1M1401 536.5h1M1576 536.5h1M3 527.5h1M178 527.5h1M527 527.5h1M702 527.5h1M877 527.5h1M1052 527.5h1M1227 527.5h1M1401 527.5h1M1576 527.5h1"/>
<rect x="1721.5" y="482.3" width="24.5" height="14" fill="#000"/>
<rect x="1721.5" y="435.6" width="24.5" height="14" fill="#000"/>
<rect x="1714.2" y="388.9" width="31.8" height="14" fill="#000"/>
<rect x="1714.2" y="342.2" width="31.8" height="14" fill="#000"/>
<rect x="1714.2" y="295.5" width="31.8" height="14" fill="#000"/>
<rect x="1714.2" y="248.8" width="31.8" height="14" fill="#000"/>
<rect x="1714.2" y="202.1" width="31.8" height="14" fill="#000"/>
<rect x="1714.2" y="155.4" width="31.8" height="14" fill="#000"/>
<rect x="1714.2" y="108.7" width="31.8" height="14" fill="#000"/>
<rect x="1721.0" y="958.9" width="25.0" height="14" fill="#000"/>
<rect x="1699.0" y="912.2" width="47.0" height="14" fill="#000"/>
<rect x="1699.0" y="865.5" width="47.0" height="14" fill="#000"/>
<rect x="1699.0" y="818.8" width="47.0" height="14" fill="#000"/>
<rect x="1699.0" y="772.1" width="47.0" height="14" fill="#000"/>
<rect x="1710.0" y="725.4" width="36.0" height="14" fill="#000"/>
<rect x="1699.0" y="678.7" width="47.0" height="14" fill="#000"/>
<rect x="1699.0" y="632.0" width="47.0" height="14" fill="#000"/>
<rect x="1699.0" y="585.3" width="47.0" height="14" fill="#000"/>
<rect x="1699.0" y="538.6" width="47.0" height="14" fill="#000"/>
<rect x="166.5" y="977" width="22.7" height="12" fill="#000"/>
<rect x="343.4" y="977" width="18.4" height="12" fill="#000"/>
<rect x="518.2" y="977" width="18.4" height="12" fill="#000"/>
<rect x="693.0" y="977" width="18.4" height="12" fill="#000"/>
<rect x="867.8" y="977" width="18.4" height="12" fill="#000"/>
<rect x="1042.6" y="977" width="18.4" height="12" fill="#000"/>
<rect x="1215.3" y="977" width="22.7" height="12" fill="#000"/>
<rect x="1390.1" y="977" width="22.7" height="12" fill="#000"/>
<rect x="1564.9" y="977" width="22.7" height="12" fill="#000"/>
<rect x="3" y="524" width="1748" height="2" fill="#7e7e7e"/>
<path shape-rendering="crispEdges" d="M1 489.5H1717" stroke="#a8a8a8" stroke-width="1" stroke-dasharray="5 5" fill="none" clip-path="url(#cpPlot)"/>
<path shape-rendering="crispEdges" d="M1 966.5H1717" stroke="#a8a8a8" stroke-width="1" stroke-dasharray="5 5" fill="none" clip-path="url(#cpPlot)"/>
<path shape-rendering="crispEdges" d="M353.5 67V524M353.5 554V990" stroke="#a8a8a8" stroke-width="1" stroke-dasharray="5 5" fill="none"/>
<path d="M3 482.5H352.6L353.0 481.7 354.0 476.5 355.0 471.5 356.0 466.7 357.0 462.0 358.0 457.5 359.0 453.1 360.0 448.9 361.0 444.7 362.0 440.7 363.0 436.8 364.0 432.9 365.0 429.2 366.0 425.5 367.0 421.9 368.0 418.3 369.0 414.9 370.0 411.4 371.0 408.1 372.0 404.8 373.0 401.5 374.0 398.3 375.0 395.2 376.0 392.1 377.0 389.0 378.0 386.0 379.0 383.0 380.0 380.1 381.0 377.2 382.0 374.4 383.0 371.5 384.0 368.8 385.0 366.0 386.0 363.3 387.0 360.6 388.0 358.0 389.0 355.4 390.0 352.8 391.0 350.3 392.0 347.8 393.0 345.3 394.0 342.8 395.0 340.4 396.0 338.0 397.0 335.7 398.0 333.4 399.0 331.0 400.0 328.8 401.0 326.5 402.0 324.3 403.0 322.1 404.0 320.0 405.0 317.8 406.0 315.7 407.0 313.6 408.0 311.5 409.0 309.5 410.0 307.5 411.0 305.5 412.0 303.5 413.0 301.6 414.0 299.7 415.0 297.7 416.0 295.9 417.0 294.0 418.0 292.2 419.0 290.4 420.0 288.6 421.0 286.8 422.0 285.1 423.0 283.3 424.0 281.6 425.0 279.9 426.0 278.2 427.0 276.6 428.0 275.0 429.0 273.3 430.0 271.8 431.0 270.2 432.0 268.6 433.0 267.1 434.0 265.5 435.0 264.0 436.0 262.6 437.0 261.1 438.0 259.6 439.0 258.2 440.0 256.8 441.0 255.4 442.0 254.0 443.0 252.6 444.0 251.2 445.0 249.9 446.0 248.5 447.0 247.2 448.0 245.9 449.0 244.6 450.0 243.4 451.0 242.1 452.0 240.9 453.0 239.6 454.0 238.4 455.0 237.2 456.0 236.0 457.0 234.9 458.0 233.7 459.0 232.5 460.0 231.4 461.0 230.3 462.0 229.2 463.0 228.1 464.0 227.0 465.0 225.9 466.0 224.8 467.0 223.8 468.0 222.7 469.0 221.7 470.0 220.7 471.0 219.7 472.0 218.7 473.0 217.7 474.0 216.7 475.0 215.8 476.0 214.8 477.0 213.9 478.0 212.9 479.0 212.0 480.0 211.1 481.0 210.2 482.0 209.3 483.0 208.4 484.0 207.5 485.0 206.6 486.0 205.8 487.0 204.9 488.0 204.1 489.0 203.3 490.0 202.4 491.0 201.6 492.0 200.8 493.0 200.0 494.0 199.2 495.0 198.5 496.0 197.7 497.0 196.9 498.0 196.2 499.0 195.4 500.0 194.7 501.0 193.9 502.0 193.2 503.0 192.5 504.0 191.8 505.0 191.1 506.0 190.4 507.0 189.7 508.0 189.0 509.0 188.3 510.0 187.7 511.0 187.0 512.0 186.4 513.0 185.7 514.0 185.1 515.0 184.4 516.0 183.8 517.0 183.2 518.0 182.6 519.0 182.0 520.0 181.4 521.0 180.8 522.0 180.2 523.0 179.6 524.0 179.0 525.0 178.4 526.0 177.9 527.0 177.3 528.0 176.8 529.0 176.2 530.0 175.7 531.0 175.1 532.0 174.6 533.0 174.1 534.0 173.5 535.0 173.0 536.0 172.5 537.0 172.0 538.0 171.5 539.0 171.0 540.0 170.5 541.0 170.0 542.0 169.5 543.0 169.0 544.0 168.6 545.0 168.1 546.0 167.6 547.0 167.2 548.0 166.7 549.0 166.3 550.0 165.8 551.0 165.4 552.0 164.9 553.0 164.5 554.0 164.1 555.0 163.7 556.0 163.2 557.0 162.8 558.0 162.4 559.0 162.0 560.0 161.6 561.0 161.2 562.0 160.8 563.0 160.4 564.0 160.0 565.0 159.6 566.0 159.2 567.0 158.9 568.0 158.5 569.0 158.1 570.0 157.7 571.0 157.4 572.0 157.0 573.0 156.7 574.0 156.3 575.0 155.9 576.0 155.6 577.0 155.3 578.0 154.9 579.0 154.6 580.0 154.2 581.0 153.9 582.0 153.6 583.0 153.3 584.0 152.9 585.0 152.6 586.0 152.3 587.0 152.0 588.0 151.7 589.0 151.4 590.0 151.1 591.0 150.8 592.0 150.5 593.0 150.2 594.0 149.9 595.0 149.6 596.0 149.3 597.0 149.0 598.0 148.7 599.0 148.4 600.0 148.2 601.0 147.9 602.0 147.6 603.0 147.3 604.0 147.1 605.0 146.8 606.0 146.5 607.0 146.3 608.0 146.0 609.0 145.8 610.0 145.5 611.0 145.3 612.0 145.0 613.0 144.8 614.0 144.5 615.0 144.3 616.0 144.1 617.0 143.8 618.0 143.6 619.0 143.3 620.0 143.1 621.0 142.9 622.0 142.7 623.0 142.4 624.0 142.2 625.0 142.0 626.0 141.8 627.0 141.6 628.0 141.3 629.0 141.1 630.0 140.9 631.0 140.7 632.0 140.5 633.0 140.3 634.0 140.1 635.0 139.9 636.0 139.7 637.0 139.5 638.0 139.3 639.0 139.1 640.0 138.9 641.0 138.7 642.0 138.5 643.0 138.3 644.0 138.1 645.0 138.0 646.0 137.8 647.0 137.6 648.0 137.4 649.0 137.2 650.0 137.1 651.0 136.9 652.0 136.7 653.0 136.5 654.0 136.4 655.0 136.2 656.0 136.0 657.0 135.9 658.0 135.7 659.0 135.5 660.0 135.4 661.0 135.2 662.0 135.1 663.0 134.9 664.0 134.8 665.0 134.6 666.0 134.4 667.0 134.3 668.0 134.1 669.0 134.0 670.0 133.8 671.0 133.7 672.0 133.6 673.0 133.4 674.0 133.3 675.0 133.1 676.0 133.0 677.0 132.8 678.0 132.7 679.0 132.6 680.0 132.4 681.0 132.3 682.0 132.2 683.0 132.0 684.0 131.9 685.0 131.8 686.0 131.6 687.0 131.5 688.0 131.4 689.0 131.3 690.0 131.1 691.0 131.0 692.0 130.9 693.0 130.8 694.0 130.7 695.0 130.5 696.0 130.4 697.0 130.3 698.0 130.2 699.0 130.1 700.0 130.0 703.0 129.6 706.0 129.3 709.0 129.0 712.0 128.7 715.0 128.4 718.0 128.1 721.0 127.8 724.0 127.5 727.0 127.2 730.0 127.0 733.0 126.7 736.0 126.4 739.0 126.2 742.0 125.9 745.0 125.7 748.0 125.5 751.0 125.3 754.0 125.0 757.0 124.8 760.0 124.6 763.0 124.4 766.0 124.2 769.0 124.0 772.0 123.8 775.0 123.7 778.0 123.5 781.0 123.3 784.0 123.1 787.0 123.0 790.0 122.8 793.0 122.6 796.0 122.5 799.0 122.3 802.0 122.2 805.0 122.1 808.0 121.9 811.0 121.8 814.0 121.6 817.0 121.5 820.0 121.4 823.0 121.3 826.0 121.1 829.0 121.0 832.0 120.9 835.0 120.8 838.0 120.7 841.0 120.6 844.0 120.5 847.0 120.4 850.0 120.3 853.0 120.2 856.0 120.1 859.0 120.0 862.0 119.9 865.0 119.8 868.0 119.7 871.0 119.7 874.0 119.6 877.0 119.5 880.0 119.4 883.0 119.3 886.0 119.3 889.0 119.2 892.0 119.1 895.0 119.1 898.0 119.0 901.0 118.9 904.0 118.9 907.0 118.8 910.0 118.7 913.0 118.7 916.0 118.6 919.0 118.6 922.0 118.5 925.0 118.5 928.0 118.4 931.0 118.3 934.0 118.3 937.0 118.3 940.0 118.2 943.0 118.2 946.0 118.1 949.0 118.1 952.0 118.0 955.0 118.0 958.0 117.9 961.0 117.9 964.0 117.9 967.0 117.8 970.0 117.8 973.0 117.7 976.0 117.7 979.0 117.7 982.0 117.6 985.0 117.6 988.0 117.6 991.0 117.5 994.0 117.5 997.0 117.5 1000.0 117.5 1003.0 117.4 1006.0 117.4 1009.0 117.4 1012.0 117.3 1015.0 117.3 1018.0 117.3 1021.0 117.3 1024.0 117.2 1027.0 117.2 1030.0 117.2 1033.0 117.2 1036.0 117.2 1039.0 117.1 1042.0 117.1 1045.0 117.1 1048.0 117.1 1051.0 117.0 1054.0 117.0 1057.0 117.0 1060.0 117.0 1063.0 117.0 1066.0 117.0 1069.0 116.9 1072.0 116.9 1075.0 116.9 1078.0 116.9 1081.0 116.9 1084.0 116.9 1087.0 116.8 1090.0 116.8 1093.0 116.8 1096.0 116.8 1099.0 116.8 1102.0 116.8 1105.0 116.8 1108.0 116.8 1111.0 116.7 1114.0 116.7 1117.0 116.7 1120.0 116.7 1123.0 116.7 1126.0 116.7 1129.0 116.7 1132.0 116.7 1135.0 116.7 1138.0 116.6 1141.0 116.6 1144.0 116.6 1147.0 116.6 1150.0 116.6 1153.0 116.6 1156.0 116.6 1159.0 116.6 1162.0 116.6 1165.0 116.6 1168.0 116.6 1171.0 116.5 1174.0 116.5 1177.0 116.5 1180.0 116.5 1183.0 116.5 1186.0 116.5 1189.0 116.5 1192.0 116.5 1195.0 116.5 1198.0 116.5 1201.0 116.5 1204.0 116.5 1207.0 116.5 1210.0 116.5 1213.0 116.5 1216.0 116.5 1219.0 116.5 1222.0 116.4 1225.0 116.4 1228.0 116.4 1231.0 116.4 1234.0 116.4 1237.0 116.4 1240.0 116.4 1243.0 116.4 1246.0 116.4 1249.0 116.4 1252.0 116.4 1255.0 116.4 1258.0 116.4 1261.0 116.4 1264.0 116.4 1267.0 116.4 1270.0 116.4 1273.0 116.4 1276.0 116.4 1279.0 116.4 1282.0 116.4 1285.0 116.4 1288.0 116.4 1291.0 116.4 1294.0 116.4 1297.0 116.4 1300.0 116.3 1303.0 116.3 1306.0 116.3 1309.0 116.3 1312.0 116.3 1315.0 116.3 1318.0 116.3 1321.0 116.3 1324.0 116.3 1327.0 116.3 1330.0 116.3 1333.0 116.3 1336.0 116.3 1339.0 116.3 1342.0 116.3 1345.0 116.3 1348.0 116.3 1351.0 116.3 1354.0 116.3 1357.0 116.3 1360.0 116.3 1363.0 116.3 1366.0 116.3 1369.0 116.3 1372.0 116.3 1375.0 116.3 1378.0 116.3 1381.0 116.3 1384.0 116.3 1387.0 116.3 1390.0 116.3 1393.0 116.3 1396.0 116.3 1399.0 116.3 1402.0 116.3 1405.0 116.3 1408.0 116.3 1411.0 116.3 1414.0 116.3 1417.0 116.3 1420.0 116.3 1423.0 116.3 1426.0 116.3 1429.0 116.3 1432.0 116.3 1435.0 116.3 1438.0 116.3 1441.0 116.3 1444.0 116.3 1447.0 116.3 1450.0 116.3 1453.0 116.3 1456.0 116.3 1459.0 116.3 1462.0 116.3 1465.0 116.3 1468.0 116.3 1471.0 116.3 1474.0 116.3 1477.0 116.3 1480.0 116.3 1483.0 116.3 1486.0 116.3 1489.0 116.3 1492.0 116.3 1495.0 116.3 1498.0 116.3 1501.0 116.3 1504.0 116.3 1507.0 116.3 1510.0 116.3 1513.0 116.3 1516.0 116.3 1519.0 116.3 1522.0 116.3 1525.0 116.3 1528.0 116.3 1531.0 116.3 1534.0 116.3 1537.0 116.3 1540.0 116.3 1543.0 116.3 1546.0 116.3 1549.0 116.3 1552.0 116.3 1555.0 116.3 1558.0 116.3 1561.0 116.3 1564.0 116.3 1567.0 116.3 1570.0 116.3 1573.0 116.3 1576.0 116.2 1579.0 116.2 1582.0 116.2 1585.0 116.2 1588.0 116.2 1591.0 116.2 1594.0 116.2 1597.0 116.2 1600.0 116.2 1603.0 116.2 1606.0 116.2 1609.0 116.2 1612.0 116.2 1615.0 116.2 1618.0 116.2 1621.0 116.2 1624.0 116.2 1627.0 116.2 1630.0 116.2 1633.0 116.2 1636.0 116.2 1639.0 116.2 1642.0 116.2 1645.0 116.2 1648.0 116.2 1651.0 116.2 1654.0 116.2 1657.0 116.2 1660.0 116.2 1663.0 116.2 1666.0 116.2 1669.0 116.2 1672.0 116.2 1675.0 116.2 1678.0 116.2 1681.0 116.2 1684.0 116.2 1687.0 116.2 1690.0 116.2 1693.0 116.2 1696.0 116.2 1699.0 116.2 1702.0 116.2 1705.0 116.2 1708.0 116.2 1711.0 116.2 1714.0 116.2 1717.0 116.2 1720.0 116.2 1723.0 116.2 1726.0 116.2 1729.0 116.2 1732.0 116.2 1735.0 116.2 1738.0 116.2 1741.0 116.2 1744.0 116.2 1747.0 116.2 1750.0 116.2" fill="none" stroke="#f6ee12" stroke-width="1.3" stroke-linejoin="round" clip-path="url(#cpPlot)"/>
<path d="M470.0 220.5 473.0 217.5 476.0 214.6 479.0 211.8 482.0 209.1 485.0 206.5 488.0 203.9 491.0 201.5 494.0 199.1 497.0 196.8 500.0 194.5 503.0 192.3 506.0 190.2 509.0 188.2 512.0 186.2 515.0 184.3 518.0 182.4 521.0 180.6 524.0 178.9 527.0 177.2 530.0 175.5 533.0 173.9 536.0 172.3 539.0 170.8 542.0 169.4 545.0 168.0 548.0 166.6 551.0 165.2 554.0 163.9 557.0 162.7 560.0 161.4 563.0 160.2 566.0 159.1 569.0 158.0 572.0 156.9 575.0 155.8 578.0 154.8 581.0 153.8 584.0 152.8 587.0 151.8 590.0 150.9 593.0 150.0 596.0 149.1 599.0 148.3 602.0 147.5 605.0 146.7 608.0 145.9 611.0 145.1 614.0 144.4 617.0 143.7 620.0 143.0 623.0 142.3 626.0 141.6 629.0 141.0 632.0 140.3 635.0 139.7 638.0 139.1 641.0 138.6 644.0 138.0 647.0 137.5 650.0 136.9 653.0 136.4 656.0 135.9 659.0 135.4 662.0 134.9 665.0 134.4 668.0 134.0 671.0 133.5 674.0 133.1 677.0 132.7 680.0 132.3 683.0 131.9 686.0 131.5 689.0 131.1 692.0 130.7 695.0 130.4 698.0 130.0 701.0 129.7 704.0 129.4 707.0 129.0 710.0 128.7 713.0 128.4 716.0 128.1 719.0 127.8 722.0 127.5 725.0 127.3 728.0 127.0 731.0 126.7 734.0 126.5 737.0 126.2 740.0 126.0 743.0 125.7 746.0 125.5 749.0 125.3 752.0 125.0 755.0 124.8 758.0 124.6 761.0 124.4 764.0 124.2 767.0 124.0 770.0 123.8 773.0 123.6 776.0 123.4 779.0 123.3 782.0 123.1 785.0 122.9 788.0 122.8 791.0 122.6 794.0 122.4 797.0 122.3 800.0 122.1 803.0 122.0 806.0 121.9 809.0 121.7 812.0 121.6 815.0 121.5 818.0 121.3 821.0 121.2 824.0 121.1 827.0 121.0 830.0 120.8 833.0 120.7 836.0 120.6 839.0 120.5 842.0 120.4 845.0 120.3 848.0 120.2 851.0 120.1 854.0 120.0 857.0 119.9 860.0 119.8 863.0 119.7 866.0 119.6 869.0 119.6 872.0 119.5 875.0 119.4 878.0 119.3 881.0 119.2 884.0 119.2 887.0 119.1 890.0 119.0 893.0 119.0 896.0 118.9 899.0 118.8 902.0 118.8 905.0 118.7 908.0 118.6 911.0 118.6 914.0 118.5 917.0 118.5 920.0 118.4 923.0 118.3 926.0 118.3 929.0 118.2 932.0 118.2 935.0 118.1 938.0 118.1 941.0 118.0 944.0 118.0 947.0 117.9 950.0 117.9 953.0 117.9 956.0 117.8 959.0 117.8 962.0 117.7 965.0 117.7 968.0 117.7 971.0 117.6 974.0 117.6 977.0 117.5 980.0 117.5 983.0 117.5 986.0 117.4 989.0 117.4 992.0 117.4 995.0 117.4 998.0 117.3 1001.0 117.3 1004.0 117.3 1007.0 117.2 1010.0 117.2 1013.0 117.2 1016.0 117.2 1019.0 117.1 1022.0 117.1 1025.0 117.1 1028.0 117.1 1031.0 117.0 1034.0 117.0 1037.0 117.0 1040.0 117.0 1043.0 117.0 1046.0 116.9 1049.0 116.9 1052.0 116.9 1055.0 116.9 1058.0 116.9 1061.0 116.8 1064.0 116.8 1067.0 116.8 1070.0 116.8 1073.0 116.8 1076.0 116.8 1079.0 116.7 1082.0 116.7 1085.0 116.7 1088.0 116.7 1091.0 116.7 1094.0 116.7 1097.0 116.6 1100.0 116.6 1103.0 116.6 1106.0 116.6 1109.0 116.6 1112.0 116.6 1115.0 116.6 1118.0 116.6 1121.0 116.6 1124.0 116.5 1127.0 116.5 1130.0 116.5 1133.0 116.5 1136.0 116.5 1139.0 116.5 1142.0 116.5 1145.0 116.5 1148.0 116.5 1151.0 116.5 1154.0 116.4 1157.0 116.4 1160.0 116.4 1163.0 116.4 1166.0 116.4 1169.0 116.4 1172.0 116.4 1175.0 116.4 1178.0 116.4 1181.0 116.4 1184.0 116.4 1187.0 116.4 1190.0 116.4 1193.0 116.3 1196.0 116.3 1199.0 116.3 1202.0 116.3 1205.0 116.3 1208.0 116.3 1211.0 116.3 1214.0 116.3 1217.0 116.3 1220.0 116.3 1223.0 116.3 1226.0 116.3 1229.0 116.3 1232.0 116.3 1235.0 116.3 1238.0 116.3 1241.0 116.3 1244.0 116.3 1247.0 116.3 1250.0 116.3 1253.0 116.2 1256.0 116.2 1259.0 116.2 1262.0 116.2 1265.0 116.2 1268.0 116.2 1271.0 116.2 1274.0 116.2 1277.0 116.2 1280.0 116.2 1283.0 116.2 1286.0 116.2 1289.0 116.2 1292.0 116.2 1295.0 116.2 1298.0 116.2 1301.0 116.2 1304.0 116.2 1307.0 116.2 1310.0 116.2 1313.0 116.2 1316.0 116.2 1319.0 116.2 1322.0 116.2 1325.0 116.2 1328.0 116.2 1331.0 116.2 1334.0 116.2 1337.0 116.2 1340.0 116.2 1343.0 116.2 1346.0 116.2 1349.0 116.2 1352.0 116.2 1355.0 116.2 1358.0 116.2 1361.0 116.2 1364.0 116.2 1367.0 116.2 1370.0 116.2 1373.0 116.2 1376.0 116.1 1379.0 116.1 1382.0 116.1 1385.0 116.1 1388.0 116.1 1391.0 116.1 1394.0 116.1 1397.0 116.1 1400.0 116.1 1403.0 116.1 1406.0 116.1 1409.0 116.1 1412.0 116.1 1415.0 116.1 1418.0 116.1 1421.0 116.1 1424.0 116.1 1427.0 116.1 1430.0 116.1 1433.0 116.1 1436.0 116.1 1439.0 116.1 1442.0 116.1 1445.0 116.1 1448.0 116.1 1451.0 116.1 1454.0 116.1 1457.0 116.1 1460.0 116.1 1463.0 116.1 1466.0 116.1 1469.0 116.1 1472.0 116.1 1475.0 116.1 1478.0 116.1 1481.0 116.1 1484.0 116.1 1487.0 116.1 1490.0 116.1 1493.0 116.1 1496.0 116.1 1499.0 116.1 1502.0 116.1 1505.0 116.1 1508.0 116.1 1511.0 116.1 1514.0 116.1 1517.0 116.1 1520.0 116.1 1523.0 116.1 1526.0 116.1 1529.0 116.1 1532.0 116.1 1535.0 116.1 1538.0 116.1 1541.0 116.1 1544.0 116.1 1547.0 116.1 1550.0 116.1 1553.0 116.1 1556.0 116.1 1559.0 116.1 1562.0 116.1 1565.0 116.1 1568.0 116.1 1571.0 116.1 1574.0 116.1 1577.0 116.1 1580.0 116.1 1583.0 116.1 1586.0 116.1 1589.0 116.1 1592.0 116.1 1595.0 116.1 1598.0 116.1 1601.0 116.1 1604.0 116.1 1607.0 116.1 1610.0 116.1 1613.0 116.1 1616.0 116.1 1619.0 116.1 1622.0 116.1 1625.0 116.1 1628.0 116.1 1631.0 116.1 1634.0 116.1 1637.0 116.1 1640.0 116.1 1643.0 116.1 1646.0 116.1 1649.0 116.1 1652.0 116.1 1655.0 116.1 1658.0 116.1 1661.0 116.1 1664.0 116.1 1667.0 116.1 1670.0 116.1 1673.0 116.1 1676.0 116.1 1679.0 116.1 1682.0 116.1 1685.0 116.1 1688.0 116.1 1691.0 116.1 1694.0 116.1 1697.0 116.1 1700.0 116.1 1703.0 116.1 1706.0 116.1 1709.0 116.1 1712.0 116.1 1715.0 116.1 1718.0 116.1 1721.0 116.1 1724.0 116.1 1727.0 116.1 1730.0 116.1 1733.0 116.1 1736.0 116.1 1739.0 116.1 1742.0 116.1 1745.0 116.1 1748.0 116.1 1751.0 116.1" fill="none" stroke="#f6ee12" stroke-width="2" clip-path="url(#cpPlot)"/>
<path shape-rendering="crispEdges" d="M40 481.5h2M46 481.5h3M52 481.5h3M78 481.5h2M93 481.5h2M110 481.5h3M129 481.5h3M142 481.5h2M158 481.5h1M160 481.5h3M187 481.5h2M193 481.5h2M229 481.5h2M233 481.5h3M235 481.5h3M245 481.5h3M251 481.5h2M253 481.5h2M256 481.5h1M273 481.5h1M279 481.5h3M281 481.5h3M321 481.5h1M328 481.5h1M329 481.5h1M340 481.5h1M347 481.5h3M805 121.5h4M810 121.5h2M857 119.5h2M869 119.5h3M876 118.5h4M883 118.5h4M897 118.5h2M909 118.5h3M921 117.5h1M925 117.5h4M931 117.5h3M937 117.5h3M945 117.5h1M946 117.5h3M947 117.5h1M960 117.5h2M967 117.5h4M981 116.5h4M982 116.5h2M986 116.5h1M989 116.5h1M990 116.5h3M992 116.5h3M997 116.5h3M1000 116.5h4M1009 116.5h3M1011 116.5h1M1012 116.5h3M1014 116.5h2M1015 116.5h1M1018 116.5h3M1020 116.5h1M1021 116.5h2M1029 116.5h1M1031 116.5h2M1037 116.5h4M1039 116.5h2M1041 116.5h3M1043 116.5h3M1046 116.5h4M1048 116.5h2M1050 116.5h1M1052 116.5h1M1054 116.5h3M1055 116.5h4M1058 116.5h4M1061 116.5h4M1062 116.5h1M1063 116.5h2M1065 116.5h4M1067 116.5h2M1070 116.5h1M1071 116.5h3M1072 116.5h4M1076 116.5h4M1080 116.5h2M1085 116.5h4M1088 116.5h4M1089 116.5h1M1092 116.5h3M1100 116.5h3M1104 116.5h1M1108 116.5h3M1110 116.5h4M1112 116.5h3M1114 116.5h3M1116 116.5h3M1119 116.5h1M1120 116.5h3M1127 115.5h2M1129 115.5h2M1130 115.5h1M1139 115.5h1M1140 115.5h2M1141 115.5h3M1146 115.5h2M1150 115.5h3M1154 115.5h3M1160 115.5h2M1161 115.5h1M1166 115.5h2M1168 115.5h4M1169 115.5h4M1174 115.5h3M1179 115.5h2M1183 115.5h4M1189 115.5h2M1190 115.5h2M1193 115.5h3M1194 115.5h2M1196 115.5h1M1198 115.5h1M1199 115.5h2M1201 115.5h3M1207 115.5h1M1211 115.5h2M1214 115.5h1M1215 115.5h1M1218 115.5h2M1220 115.5h2M1225 115.5h3M1226 115.5h2M1227 115.5h1M1228 115.5h1M1229 115.5h1M1230 115.5h2M1233 115.5h2M1234 115.5h3M1236 115.5h3M1238 115.5h4M1239 115.5h2M1240 115.5h2M1241 115.5h3M1249 115.5h2M1250 115.5h1M1251 115.5h3M1255 115.5h3M1256 115.5h2M1257 115.5h1M1262 115.5h3M1264 115.5h3M1271 115.5h4M1272 115.5h2M1273 115.5h2M1275 115.5h3M1278 115.5h4M1283 115.5h2M1286 115.5h2M1289 115.5h2M1291 115.5h4M1294 115.5h4M1295 115.5h1M1296 115.5h4M1298 115.5h1M1299 115.5h1M1302 115.5h3M1303 115.5h2M1304 115.5h2M1305 115.5h2M1306 115.5h3M1309 115.5h4M1310 115.5h3M1311 115.5h1M1314 115.5h2M1316 115.5h2M1318 115.5h3M1322 115.5h3M1325 115.5h2M1327 115.5h1M1328 115.5h1M1330 115.5h1M1333 115.5h1M1336 115.5h1M1337 115.5h1M1339 115.5h2M1340 115.5h2M1341 115.5h3M1343 115.5h2M1346 115.5h1M1347 115.5h2M1351 115.5h1M1352 115.5h4M1353 115.5h2M1355 115.5h3M1356 115.5h3M1359 115.5h3M1360 115.5h4M1362 115.5h2M1365 115.5h1M1366 115.5h2M1370 115.5h4M1371 115.5h1M1373 115.5h3M1375 115.5h1M1376 115.5h3M1379 115.5h4M1381 115.5h1M1383 115.5h2M1385 115.5h4M1390 115.5h2M1391 115.5h3M1393 115.5h1M1395 115.5h3M1398 115.5h3M1400 115.5h3M1402 115.5h3M1405 115.5h2M1406 115.5h1M1408 115.5h4M1410 115.5h1M1411 115.5h1M1412 115.5h2M1415 115.5h1M1416 115.5h4M1417 115.5h2M1418 115.5h2M1419 115.5h2M1420 115.5h1M1424 115.5h4M1425 115.5h1M1426 115.5h2M1430 115.5h4M1432 115.5h4M1433 115.5h1M1435 115.5h4M1436 115.5h3M1437 115.5h2M1439 115.5h3M1440 115.5h2M1441 115.5h1M1442 115.5h1M1444 115.5h1M1445 115.5h3M1446 115.5h3M1451 115.5h2M1457 115.5h3M1459 115.5h1M1460 115.5h1M1461 115.5h1M1463 115.5h2M1466 115.5h3M1468 115.5h3M1471 115.5h2M1472 115.5h1M1473 115.5h1M1477 115.5h2M1478 115.5h3M1482 115.5h2M1484 115.5h2M1485 115.5h3M1487 115.5h2M1488 115.5h1M1489 115.5h3M1490 115.5h3M1495 115.5h3M1505 115.5h3M1506 115.5h1M1507 115.5h3M1508 115.5h1M1509 115.5h4M1514 115.5h3M1515 115.5h3M1516 115.5h3M1517 115.5h4M1521 115.5h1M1523 115.5h3M1525 115.5h2M1526 115.5h4M1532 115.5h4M1535 115.5h1M1536 115.5h3M1540 115.5h3M1543 115.5h4M1544 115.5h3M1545 115.5h3M1546 115.5h4M1550 115.5h1M1553 115.5h2M1557 115.5h3M1558 115.5h1M1559 115.5h4M1561 115.5h3M1562 115.5h3M1563 115.5h2M1566 115.5h1M1567 115.5h2M1569 115.5h3M1571 115.5h2M1574 115.5h4M1577 115.5h2M1579 115.5h2M1580 115.5h4M1581 115.5h1M1586 115.5h1M1587 115.5h2M1588 115.5h3M1591 115.5h3M1592 115.5h2M1595 115.5h1M1597 115.5h2M1598 115.5h4M1603 115.5h1M1604 115.5h4M1606 115.5h1M1608 115.5h4M1610 115.5h3M1611 115.5h2M1614 115.5h1M1615 115.5h1M1616 115.5h3M1618 115.5h3M1619 115.5h2M1620 115.5h2M1622 115.5h4M1623 115.5h3M1624 115.5h4M1625 115.5h2M1626 115.5h1M1628 115.5h3M1632 115.5h2M1633 115.5h1M1639 115.5h4M1640 115.5h1M1641 115.5h3M1643 115.5h3M1644 115.5h4M1645 115.5h4M1647 115.5h1M1648 115.5h4M1649 115.5h1M1650 115.5h4M1652 115.5h4M1653 115.5h2M1657 115.5h1M1658 115.5h2M1663 115.5h2M1665 115.5h3M1666 115.5h3M1671 115.5h1M1673 115.5h4M1676 115.5h4M1677 115.5h2M1679 115.5h2M1682 115.5h3M1686 115.5h1M1696 115.5h2M1698 115.5h4M1699 115.5h2M1700 115.5h3M1702 115.5h3M1704 115.5h3M1705 115.5h4M1711 115.5h2M1712 115.5h3M1714 115.5h4M1715 115.5h3M1716 115.5h3M1719 115.5h4M1721 115.5h2M1722 115.5h4M1723 115.5h4M1725 115.5h1M1727 115.5h4M1728 115.5h1M1730 115.5h1M1732 115.5h2M1735 115.5h3M1742 115.5h3M1744 115.5h1M1747 115.5h1M1748 115.5h1M1749 115.5h2" stroke="#f6ee12" stroke-width="1" fill="none" clip-path="url(#cpPlot)"/>
<path d="M352.5 601V965" stroke="#0d5a60" stroke-width="1" fill="none"/>
<path d="M3 965.4H352.4M352.6 600.5L353.0 600.7 354.0 600.7 355.0 605.3 356.0 610.3 357.0 615.2 358.0 619.8 359.0 624.3 360.0 628.7 361.0 632.9 362.0 637.1 363.0 641.1 364.0 645.0 365.0 648.9 366.0 652.6 367.0 656.3 368.0 659.9 369.0 663.4 370.0 666.9 371.0 670.3 372.0 673.7 373.0 677.0 374.0 680.2 375.0 683.4 376.0 686.6 377.0 689.7 378.0 692.7 379.0 695.7 380.0 698.7 381.0 701.6 382.0 704.5 383.0 707.4 384.0 710.2 385.0 712.9 386.0 715.7 387.0 718.4 388.0 721.0 389.0 723.7 390.0 726.3 391.0 728.8 392.0 731.4 393.0 733.9 394.0 736.3 395.0 738.8 396.0 741.2 397.0 743.6 398.0 745.9 399.0 748.3 400.0 750.6 401.0 752.8 402.0 755.1 403.0 757.3 404.0 759.5 405.0 761.6 406.0 763.8 407.0 765.9 408.0 768.0 409.0 770.0 410.0 772.1 411.0 774.1 412.0 776.1 413.0 778.0 414.0 780.0 415.0 781.9 416.0 783.8 417.0 785.7 418.0 787.5 419.0 789.3 420.0 791.2 421.0 792.9 422.0 794.7 423.0 796.5 424.0 798.2 425.0 799.9 426.0 801.6 427.0 803.2 428.0 804.9 429.0 806.5 430.0 808.1 431.0 809.7 432.0 811.3 433.0 812.9 434.0 814.4 435.0 815.9 436.0 817.4 437.0 818.9 438.0 820.4 439.0 821.8 440.0 823.3 441.0 824.7 442.0 826.1 443.0 827.5 444.0 828.8 445.0 830.2 446.0 831.5 447.0 832.9 448.0 834.2 449.0 835.5 450.0 836.8 451.0 838.0 452.0 839.3 453.0 840.5 454.0 841.8 455.0 843.0 456.0 844.2 457.0 845.4 458.0 846.5 459.0 847.7 460.0 848.8 461.0 850.0 462.0 851.1 463.0 852.2 464.0 853.3 465.0 854.4 466.0 855.5 467.0 856.5 468.0 857.6 469.0 858.6 470.0 859.7 471.0 860.7 472.0 861.7 473.0 862.7 474.0 863.7 475.0 864.6 476.0 865.6 477.0 866.5 478.0 867.5 479.0 868.4 480.0 869.3 481.0 870.3 482.0 871.2 483.0 872.1 484.0 872.9 485.0 873.8 486.0 874.7 487.0 875.5 488.0 876.4 489.0 877.2 490.0 878.1 491.0 878.9 492.0 879.7 493.0 880.5 494.0 881.3 495.0 882.1 496.0 882.9 497.0 883.6 498.0 884.4 499.0 885.1 500.0 885.9 501.0 886.6 502.0 887.4 503.0 888.1 504.0 888.8 505.0 889.5 506.0 890.2 507.0 890.9 508.0 891.6 509.0 892.3 510.0 892.9 511.0 893.6 512.0 894.3 513.0 894.9 514.0 895.6 515.0 896.2 516.0 896.8 517.0 897.5 518.0 898.1 519.0 898.7 520.0 899.3 521.0 899.9 522.0 900.5 523.0 901.1 524.0 901.7 525.0 902.3 526.0 902.8 527.0 903.4 528.0 904.0 529.0 904.5 530.0 905.1 531.0 905.6 532.0 906.1 533.0 906.7 534.0 907.2 535.0 907.7 536.0 908.2 537.0 908.8 538.0 909.3 539.0 909.8 540.0 910.3 541.0 910.7 542.0 911.2 543.0 911.7 544.0 912.2 545.0 912.7 546.0 913.1 547.0 913.6 548.0 914.1 549.0 914.5 550.0 915.0 551.0 915.4 552.0 915.9 553.0 916.3 554.0 916.7 555.0 917.2 556.0 917.6 557.0 918.0 558.0 918.4 559.0 918.8 560.0 919.2 561.0 919.6 562.0 920.0 563.0 920.4 564.0 920.8 565.0 921.2 566.0 921.6 567.0 922.0 568.0 922.4 569.0 922.7 570.0 923.1 571.0 923.5 572.0 923.8 573.0 924.2 574.0 924.6 575.0 924.9 576.0 925.3 577.0 925.6 578.0 926.0 579.0 926.3 580.0 926.6 581.0 927.0 582.0 927.3 583.0 927.6 584.0 927.9 585.0 928.3 586.0 928.6 587.0 928.9 588.0 929.2 589.0 929.5 590.0 929.8 591.0 930.1 592.0 930.4 593.0 930.7 594.0 931.0 595.0 931.3 596.0 931.6 597.0 931.9 598.0 932.2 599.0 932.5 600.0 932.7 601.0 933.0 602.0 933.3 603.0 933.6 604.0 933.8 605.0 934.1 606.0 934.4 607.0 934.6 608.0 934.9 609.0 935.2 610.0 935.4 611.0 935.7 612.0 935.9 613.0 936.2 614.0 936.4 615.0 936.6 616.0 936.9 617.0 937.1 618.0 937.4 619.0 937.6 620.0 937.8 621.0 938.1 622.0 938.3 623.0 938.5 624.0 938.7 625.0 939.0 626.0 939.2 627.0 939.4 628.0 939.6 629.0 939.8 630.0 940.0 631.0 940.3 632.0 940.5 633.0 940.7 634.0 940.9 635.0 941.1 636.0 941.3 637.0 941.5 638.0 941.7 639.0 941.9 640.0 942.1 641.0 942.3 642.0 942.5 643.0 942.6 644.0 942.8 645.0 943.0 646.0 943.2 647.0 943.4 648.0 943.6 649.0 943.7 650.0 943.9 651.0 944.1 652.0 944.3 653.0 944.4 654.0 944.6 655.0 944.8 656.0 945.0 657.0 945.1 658.0 945.3 659.0 945.4 660.0 945.6 661.0 945.8 662.0 945.9 663.0 946.1 664.0 946.2 665.0 946.4 666.0 946.6 667.0 946.7 668.0 946.9 669.0 947.0 670.0 947.2 671.0 947.3 672.0 947.5 673.0 947.6 674.0 947.7 675.0 947.9 676.0 948.0 677.0 948.2 678.0 948.3 679.0 948.4 680.0 948.6 681.0 948.7 682.0 948.8 683.0 949.0 684.0 949.1 685.0 949.2 686.0 949.4 687.0 949.5 688.0 949.6 689.0 949.8 690.0 949.9 691.0 950.0 692.0 950.1 693.0 950.2 694.0 950.4 695.0 950.5 696.0 950.6 697.0 950.7 698.0 950.8 699.0 951.0 700.0 951.1 703.0 951.4 706.0 951.7 709.0 952.1 712.0 952.4 715.0 952.7 718.0 953.0 721.0 953.3 724.0 953.6 727.0 953.8 730.0 954.1 733.0 954.4 736.0 954.6 739.0 954.9 742.0 955.1 745.0 955.3 748.0 955.6 751.0 955.8 754.0 956.0 757.0 956.2 760.0 956.4 763.0 956.6 766.0 956.8 769.0 957.0 772.0 957.2 775.0 957.4 778.0 957.6 781.0 957.8 784.0 957.9 787.0 958.1 790.0 958.3 793.0 958.4 796.0 958.6 799.0 958.7 802.0 958.9 805.0 959.0 808.0 959.2 811.0 959.3 814.0 959.4 817.0 959.6 820.0 959.7 823.0 959.8 826.0 959.9 829.0 960.1 832.0 960.2 835.0 960.3 838.0 960.4 841.0 960.5 844.0 960.6 847.0 960.7 850.0 960.8 853.0 960.9 856.0 961.0 859.0 961.1 862.0 961.2 865.0 961.3 868.0 961.4 871.0 961.4 874.0 961.5 877.0 961.6 880.0 961.7 883.0 961.8 886.0 961.8 889.0 961.9 892.0 962.0 895.0 962.0 898.0 962.1 901.0 962.2 904.0 962.2 907.0 962.3 910.0 962.4 913.0 962.4 916.0 962.5 919.0 962.5 922.0 962.6 925.0 962.6 928.0 962.7 931.0 962.7 934.0 962.8 937.0 962.8 940.0 962.9 943.0 962.9 946.0 963.0 949.0 963.0 952.0 963.1 955.0 963.1 958.0 963.2 961.0 963.2 964.0 963.2 967.0 963.3 970.0 963.3 973.0 963.4 976.0 963.4 979.0 963.4 982.0 963.5 985.0 963.5 988.0 963.5 991.0 963.6 994.0 963.6 997.0 963.6 1000.0 963.6 1003.0 963.7 1006.0 963.7 1009.0 963.7 1012.0 963.8 1015.0 963.8 1018.0 963.8 1021.0 963.8 1024.0 963.9 1027.0 963.9 1030.0 963.9 1033.0 963.9 1036.0 964.0 1039.0 964.0 1042.0 964.0 1045.0 964.0 1048.0 964.0 1051.0 964.1 1054.0 964.1 1057.0 964.1 1060.0 964.1 1063.0 964.1 1066.0 964.1 1069.0 964.2 1072.0 964.2 1075.0 964.2 1078.0 964.2 1081.0 964.2 1084.0 964.2 1087.0 964.3 1090.0 964.3 1093.0 964.3 1096.0 964.3 1099.0 964.3 1102.0 964.3 1105.0 964.3 1108.0 964.4 1111.0 964.4 1114.0 964.4 1117.0 964.4 1120.0 964.4 1123.0 964.4 1126.0 964.4 1129.0 964.4 1132.0 964.4 1135.0 964.5 1138.0 964.5 1141.0 964.5 1144.0 964.5 1147.0 964.5 1150.0 964.5 1153.0 964.5 1156.0 964.5 1159.0 964.5 1162.0 964.5 1165.0 964.5 1168.0 964.5 1171.0 964.6 1174.0 964.6 1177.0 964.6 1180.0 964.6 1183.0 964.6 1186.0 964.6 1189.0 964.6 1192.0 964.6 1195.0 964.6 1198.0 964.6 1201.0 964.6 1204.0 964.6 1207.0 964.6 1210.0 964.6 1213.0 964.6 1216.0 964.7 1219.0 964.7 1222.0 964.7 1225.0 964.7 1228.0 964.7 1231.0 964.7 1234.0 964.7 1237.0 964.7 1240.0 964.7 1243.0 964.7 1246.0 964.7 1249.0 964.7 1252.0 964.7 1255.0 964.7 1258.0 964.7 1261.0 964.7 1264.0 964.7 1267.0 964.7 1270.0 964.7 1273.0 964.7 1276.0 964.7 1279.0 964.7 1282.0 964.7 1285.0 964.7 1288.0 964.7 1291.0 964.7 1294.0 964.8 1297.0 964.8 1300.0 964.8 1303.0 964.8 1306.0 964.8 1309.0 964.8 1312.0 964.8 1315.0 964.8 1318.0 964.8 1321.0 964.8 1324.0 964.8 1327.0 964.8 1330.0 964.8 1333.0 964.8 1336.0 964.8 1339.0 964.8 1342.0 964.8 1345.0 964.8 1348.0 964.8 1351.0 964.8 1354.0 964.8 1357.0 964.8 1360.0 964.8 1363.0 964.8 1366.0 964.8 1369.0 964.8 1372.0 964.8 1375.0 964.8 1378.0 964.8 1381.0 964.8 1384.0 964.8 1387.0 964.8 1390.0 964.8 1393.0 964.8 1396.0 964.8 1399.0 964.8 1402.0 964.8 1405.0 964.8 1408.0 964.8 1411.0 964.8 1414.0 964.8 1417.0 964.8 1420.0 964.8 1423.0 964.8 1426.0 964.8 1429.0 964.8 1432.0 964.8 1435.0 964.8 1438.0 964.8 1441.0 964.8 1444.0 964.8 1447.0 964.8 1450.0 964.8 1453.0 964.8 1456.0 964.8 1459.0 964.8 1462.0 964.8 1465.0 964.8 1468.0 964.8 1471.0 964.8 1474.0 964.8 1477.0 964.8 1480.0 964.8 1483.0 964.8 1486.0 964.8 1489.0 964.8 1492.0 964.8 1495.0 964.8 1498.0 964.8 1501.0 964.8 1504.0 964.8 1507.0 964.8 1510.0 964.8 1513.0 964.8 1516.0 964.8 1519.0 964.9 1522.0 964.9 1525.0 964.9 1528.0 964.9 1531.0 964.9 1534.0 964.9 1537.0 964.9 1540.0 964.9 1543.0 964.9 1546.0 964.9 1549.0 964.9 1552.0 964.9 1555.0 964.9 1558.0 964.9 1561.0 964.9 1564.0 964.9 1567.0 964.9 1570.0 964.9 1573.0 964.9 1576.0 964.9 1579.0 964.9 1582.0 964.9 1585.0 964.9 1588.0 964.9 1591.0 964.9 1594.0 964.9 1597.0 964.9 1600.0 964.9 1603.0 964.9 1606.0 964.9 1609.0 964.9 1612.0 964.9 1615.0 964.9 1618.0 964.9 1621.0 964.9 1624.0 964.9 1627.0 964.9 1630.0 964.9 1633.0 964.9 1636.0 964.9 1639.0 964.9 1642.0 964.9 1645.0 964.9 1648.0 964.9 1651.0 964.9 1654.0 964.9 1657.0 964.9 1660.0 964.9 1663.0 964.9 1666.0 964.9 1669.0 964.9 1672.0 964.9 1675.0 964.9 1678.0 964.9 1681.0 964.9 1684.0 964.9 1687.0 964.9 1690.0 964.9 1693.0 964.9 1696.0 964.9 1699.0 964.9 1702.0 964.9 1705.0 964.9 1708.0 964.9 1711.0 964.9 1714.0 964.9 1717.0 964.9 1720.0 964.9 1723.0 964.9 1726.0 964.9 1729.0 964.9 1732.0 964.9 1735.0 964.9 1738.0 964.9 1741.0 964.9 1744.0 964.9 1747.0 964.9 1750.0 964.9" fill="none" stroke="#1cc6d0" stroke-width="1.3" stroke-linejoin="round" clip-path="url(#cpPlot)"/>
<path shape-rendering="crispEdges" d="M78 964.5h2M124 964.5h2M142 964.5h1M162 964.5h2M175 964.5h2M221 964.5h1M233 964.5h2M234 964.5h1M264 964.5h1M270 964.5h2M322 964.5h2M327 964.5h1M345 964.5h2M1341 963.5h2M1433 963.5h2M1446 963.5h1M1480 963.5h1M1492 963.5h3M1521 963.5h3M1531 963.5h3M1538 963.5h3M1562 963.5h1M1563 963.5h3M1577 963.5h3M1603 963.5h2M1634 963.5h1M1649 963.5h2M1676 963.5h2M1699 963.5h1M1711 963.5h1M1728 963.5h3M1730 963.5h1" stroke="#1cc6d0" stroke-width="1" fill="none" clip-path="url(#cpPlot)"/>
<path d="M343 57H363L353 67Z" fill="#f88c22"/>
<path d="M344 527H362V546H356.2L352.8 552.6L349.4 546H344Z" fill="#000" stroke="#f8902a" stroke-width="2" stroke-linejoin="miter"/>
<path d="M348 531H357V533H354V542H351V533H348Z" fill="#f8902a"/>
<path d="M8.5 476.5H29.5L41.5 489L29.5 501.5H8.5Q6.5 501.5 6.5 499.5V478.5Q6.5 476.5 8.5 476.5Z" fill="#1f1d08" stroke="#e8de1e" stroke-width="1.3" stroke-linejoin="round"/>
<text x="15.1" y="493" font-size="12.5" fill="#efe61e" text-anchor="start" font-weight="normal" textLength="16.2" lengthAdjust="spacingAndGlyphs">C 1</text>
<path d="M9 953H29.5L42 966L29.5 979H9Q6 979 6 976V956Q6 953 9 953Z" fill="#22d0d8"/>
<text x="15.1" y="970" font-size="12.5" fill="#000" text-anchor="start" font-weight="normal" textLength="16.2" lengthAdjust="spacingAndGlyphs">C 2</text>
<path d="M1730 887.5L1742 877.5V885.3H1751V889.7H1742V897.5Z" fill="#22d0d8"/>
<path d="M1710 64H1742Q1744 64 1744 66V98Z" fill="#4f4f4f"/>
<circle cx="1737.2" cy="70.4" r="4.2" fill="#5a5a5a" stroke="#9c9c9c" stroke-width="1.3"/>
<path d="M1734 73.8L1728 79.4" stroke="#a4a4a4" stroke-width="2.2" stroke-linecap="round" fill="none"/>
<text x="1746.3" y="493.7" font-size="13.4" fill="#d0c61c" text-anchor="end" font-weight="normal">0 V</text>
<text x="1746.3" y="447.0" font-size="13.4" fill="#d0c61c" text-anchor="end" font-weight="normal">6 V</text>
<text x="1746.3" y="400.3" font-size="13.4" fill="#d0c61c" text-anchor="end" font-weight="normal">12 V</text>
<text x="1746.3" y="353.6" font-size="13.4" fill="#d0c61c" text-anchor="end" font-weight="normal">18 V</text>
<text x="1746.3" y="306.9" font-size="13.4" fill="#d0c61c" text-anchor="end" font-weight="normal">24 V</text>
<text x="1746.3" y="260.2" font-size="13.4" fill="#d0c61c" text-anchor="end" font-weight="normal">30 V</text>
<text x="1746.3" y="213.5" font-size="13.4" fill="#d0c61c" text-anchor="end" font-weight="normal">36 V</text>
<text x="1746.3" y="166.8" font-size="13.4" fill="#d0c61c" text-anchor="end" font-weight="normal">42 V</text>
<text x="1746.3" y="120.1" font-size="13.4" fill="#d0c61c" text-anchor="end" font-weight="normal">48 V</text>
<text x="1746.3" y="970.1" font-size="13.4" fill="#1ea8b4" text-anchor="end" font-weight="normal">0 A</text>
<text x="1746.3" y="924.1" font-size="13.4" fill="#1ea8b4" text-anchor="end" font-weight="normal">600 µA</text>
<text x="1746.3" y="876.7" font-size="13.4" fill="#1ea8b4" text-anchor="end" font-weight="normal">1.2 mA</text>
<text x="1746.3" y="830.0" font-size="13.4" fill="#1ea8b4" text-anchor="end" font-weight="normal">1.8 mA</text>
<text x="1746.3" y="783.3" font-size="13.4" fill="#1ea8b4" text-anchor="end" font-weight="normal">2.4 mA</text>
<text x="1746.3" y="736.6" font-size="13.4" fill="#1ea8b4" text-anchor="end" font-weight="normal">3 mA</text>
<text x="1746.3" y="689.9" font-size="13.4" fill="#1ea8b4" text-anchor="end" font-weight="normal">3.6 mA</text>
<text x="1746.3" y="643.2" font-size="13.4" fill="#1ea8b4" text-anchor="end" font-weight="normal">4.2 mA</text>
<text x="1746.3" y="596.5" font-size="13.4" fill="#1ea8b4" text-anchor="end" font-weight="normal">4.8 mA</text>
<text x="1746.3" y="549.8" font-size="13.4" fill="#1ea8b4" text-anchor="end" font-weight="normal">5.4 mA</text>
<text x="178.1" y="987" font-size="13" fill="#8c8c8c" text-anchor="middle" font-weight="normal">-2 s</text>
<text x="352.9" y="987" font-size="13" fill="#8c8c8c" text-anchor="middle" font-weight="normal">0 s</text>
<text x="527.7" y="987" font-size="13" fill="#8c8c8c" text-anchor="middle" font-weight="normal">2 s</text>
<text x="702.5" y="987" font-size="13" fill="#8c8c8c" text-anchor="middle" font-weight="normal">4 s</text>
<text x="877.3" y="987" font-size="13" fill="#8c8c8c" text-anchor="middle" font-weight="normal">6 s</text>
<text x="1052.1" y="987" font-size="13" fill="#8c8c8c" text-anchor="middle" font-weight="normal">8 s</text>
<text x="1226.9" y="987" font-size="13" fill="#8c8c8c" text-anchor="middle" font-weight="normal">10 s</text>
<text x="1401.7" y="987" font-size="13" fill="#8c8c8c" text-anchor="middle" font-weight="normal">12 s</text>
<text x="1576.5" y="987" font-size="13" fill="#8c8c8c" text-anchor="middle" font-weight="normal">14 s</text>
<path shape-rendering="crispEdges" d="M353.5 974V979M353.5 984V989" stroke="#a8a8a8" stroke-width="1" fill="none"/>
<circle cx="1761.7" cy="504" r="2.1" fill="#cfcfcf"/>
<circle cx="1761.7" cy="512.5" r="2.1" fill="#cfcfcf"/>
<circle cx="1761.7" cy="521" r="2.1" fill="#cfcfcf"/>
<path d="M1769.5 996V29.5H1920" fill="none" stroke="#6a6460" stroke-width="1"/>
<path d="M1769.5 995.5H1920" fill="none" stroke="#6a6460" stroke-width="1"/>
<g id="logo">
<g stroke="#fff" stroke-width="0.9" stroke-linejoin="round">
<text x="1786.25" y="25.3" font-size="29.2" fill="#fff" text-anchor="start" font-weight="bold" textLength="17.1" lengthAdjust="spacingAndGlyphs">T</text>
</g>
<g stroke="#fff" stroke-width="0.9" stroke-linejoin="round">
<text x="1797.91" y="25.3" font-size="29.2" fill="#fff" text-anchor="start" font-weight="bold" textLength="13.6" lengthAdjust="spacingAndGlyphs">e</text>
</g>
<g stroke="#fff" stroke-width="0.9" stroke-linejoin="round">
<text x="1839.58" y="25.3" font-size="29.2" fill="#fff" text-anchor="start" font-weight="bold" textLength="8.7" lengthAdjust="spacingAndGlyphs">r</text>
</g>
<g stroke="#fff" stroke-width="0.9" stroke-linejoin="round">
<text x="1847.91" y="25.3" font-size="29.2" fill="#fff" text-anchor="start" font-weight="bold" textLength="16.7" lengthAdjust="spacingAndGlyphs">o</text>
</g>
<g stroke="#fff" stroke-width="0.9" stroke-linejoin="round">
<text x="1865.94" y="25.3" font-size="29.2" fill="#fff" text-anchor="start" font-weight="bold" textLength="14.5" lengthAdjust="spacingAndGlyphs">n</text>
</g>
<g stroke="#fff" stroke-width="0.9" stroke-linejoin="round">
<text x="1880.25" y="25.3" font-size="29.2" fill="#fff" text-anchor="start" font-weight="bold" textLength="7.3" lengthAdjust="spacingAndGlyphs">i</text>
</g>
<g stroke="#fff" stroke-width="0.9" stroke-linejoin="round">
<text x="1888.15" y="25.3" font-size="29.2" fill="#fff" text-anchor="start" font-weight="bold" textLength="13.9" lengthAdjust="spacingAndGlyphs">x</text>
</g>
<rect x="1815.5" y="4.2" width="5.1" height="21.5" fill="#fff"/>
<path d="M1824.3 17.7L1830.4 25.7H1824.3L1821.6 22.2Z" fill="#fff"/>
<path d="M1815.2 25.7H1820.4L1830.8 9.5H1826.5Z" fill="#1fb9dc"/>
<path d="M1831.1 25.7V13.2H1830.1V9.5H1832.3L1835.65 4.6H1836.2V9.5H1839.6V13.2H1836.2V25.7Z" fill="#fff"/>
</g>
<text x="1802.6" y="43.6" font-size="13.5" fill="#ececec" text-anchor="start" font-weight="bold" textLength="85.2" lengthAdjust="spacingAndGlyphs">Add New...</text>
<rect x="1778.5" y="54.5" width="62" height="36" rx="6" ry="6" fill="url(#gBtn)" stroke="#625c57" stroke-width="1"/>
<rect x="1850.5" y="54.5" width="62" height="36" rx="6" ry="6" fill="url(#gBtn)" stroke="#625c57" stroke-width="1"/>
<rect x="1778.5" y="100.5" width="62" height="36" rx="6" ry="6" fill="url(#gBtn)" stroke="#625c57" stroke-width="1"/>
<rect x="1850.5" y="100.5" width="62" height="36" rx="6" ry="6" fill="url(#gBtn)" stroke="#625c57" stroke-width="1"/>
<rect x="1778.5" y="146.5" width="62" height="36" rx="6" ry="6" fill="url(#gBtn)" stroke="#625c57" stroke-width="1"/>
<rect x="1850.5" y="146.5" width="62" height="36" rx="6" ry="6" fill="url(#gBtn)" stroke="#625c57" stroke-width="1"/>
<rect x="1778.5" y="196.5" width="62" height="36" rx="6" ry="6" fill="url(#gBtn)" stroke="#625c57" stroke-width="1"/>
<rect x="1850.5" y="196.5" width="62" height="36" rx="6" ry="6" fill="url(#gBtn)" stroke="#625c57" stroke-width="1"/>
<text x="1784.8" y="77" font-size="15" fill="#e8e8e8" text-anchor="start" font-weight="normal" textLength="50.7" lengthAdjust="spacingAndGlyphs">Cursors</text>
<text x="1856.8" y="77" font-size="15" fill="#e8e8e8" text-anchor="start" font-weight="normal" textLength="48.1" lengthAdjust="spacingAndGlyphs">Callout</text>
<text x="1778.97" y="123" font-size="15" fill="#e8e8e8" text-anchor="start" font-weight="normal" textLength="60.4" lengthAdjust="spacingAndGlyphs">Measure</text>
<text x="1858.3" y="123" font-size="15" fill="#e8e8e8" text-anchor="start" font-weight="normal" textLength="46.0" lengthAdjust="spacingAndGlyphs">Search</text>
<text x="1784.51" y="160.7" font-size="15" fill="#e8e8e8" text-anchor="start" font-weight="normal" textLength="49.5" lengthAdjust="spacingAndGlyphs">Results</text>
<text x="1791.9" y="176.8" font-size="15" fill="#e8e8e8" text-anchor="start" font-weight="normal" textLength="35.8" lengthAdjust="spacingAndGlyphs">Table</text>
<text x="1866.53" y="169" font-size="15" fill="#e8e8e8" text-anchor="start" font-weight="normal" textLength="27.6" lengthAdjust="spacingAndGlyphs">Plot</text>
<text x="1855.29" y="218.8" font-size="15" fill="#e8e8e8" text-anchor="start" font-weight="normal" textLength="52.0" lengthAdjust="spacingAndGlyphs">More...</text>
<rect x="1773" y="189.5" width="144" height="1" fill="#5f5955"/>
<rect x="1773" y="241" width="144" height="1" fill="#5f5955"/>
<rect x="1798" y="203" width="22" height="19" fill="none" stroke="#b4b4b4" stroke-width="1.6" stroke-dasharray="3.2 2.4"/>
<circle cx="1811" cy="210.5" r="4.3" fill="#2c2c2c" stroke="#c0c0c0" stroke-width="1.4"/>
<path d="M1807.6 214L1803 217.6" stroke="#c0c0c0" stroke-width="2.2" stroke-linecap="round"/>
<path d="M1815 217.5L1823.5 221.5L1820.2 222.6L1822 226L1820.4 226.8L1818.6 223.4L1816.2 225.6Z" fill="#b8b8b8"/>
<rect x="3" y="1001" width="90" height="76" rx="4" fill="#c8c8c8"/>
<path d="M3 1020V1005Q3 1001 7 1001H89Q93 1001 93 1005V1020Z" fill="#4b4621"/>
<rect x="3" y="1020" width="90" height="1.5" fill="#b2b2b0"/>
<text x="8.5" y="1015" font-size="15.3" fill="#f2ea1e" text-anchor="start" font-weight="normal" textLength="28.5" lengthAdjust="spacingAndGlyphs">Ch 1</text>
<text x="8.5" y="1034.8" font-size="15" fill="#111" text-anchor="start" font-weight="normal" textLength="43.0" lengthAdjust="spacingAndGlyphs">6 V/div</text>
<text x="8.5" y="1073" font-size="15" fill="#111" text-anchor="start" font-weight="normal" textLength="44.7" lengthAdjust="spacingAndGlyphs">20 kHz</text>
<rect x="98" y="1001" width="90" height="76" rx="4" fill="#c8c8c8"/>
<path d="M98 1020V1005Q98 1001 102 1001H184Q188 1001 188 1005V1020Z" fill="#22d0d8"/>
<rect x="98" y="1020" width="90" height="1.5" fill="#b4aeae"/>
<text x="103.6" y="1015" font-size="15.3" fill="#04181a" text-anchor="start" font-weight="normal" textLength="29.9" lengthAdjust="spacingAndGlyphs">Ch 2</text>
<text x="103.6" y="1034.8" font-size="15" fill="#111" text-anchor="start" font-weight="normal" textLength="68.6" lengthAdjust="spacingAndGlyphs">600 µA/div</text>
<text x="103.6" y="1073" font-size="15" fill="#111" text-anchor="start" font-weight="normal" textLength="44.8" lengthAdjust="spacingAndGlyphs">20 kHz</text>
<path d="M147.9 1002.2H149.8V1009H153.8L148.85 1016.6L143.9 1009H147.9Z" fill="#000"/>
<g transform="translate(8.6,1040.4)" fill="none" stroke="#222" stroke-width="1.1"><path d="M2.2 6.2Q2.2 0.8 7.2 0.8Q12.6 0.8 13.2 6.6"/><circle cx="7.3" cy="3.6" r="2.5"/><rect x="0.6" y="6.4" width="2.4" height="5" rx="1.2" fill="#e8e8e8"/><rect x="11" y="7" width="3.6" height="5.2" rx="0.8" fill="#e8e8e8"/></g>
<g transform="translate(103.8,1040.4)" fill="none" stroke="#222" stroke-width="1.1"><path d="M2.2 6.2Q2.2 0.8 7.2 0.8Q12.6 0.8 13.2 6.6"/><circle cx="7.3" cy="3.6" r="2.5"/><rect x="0.6" y="6.4" width="2.4" height="5" rx="1.2" fill="#e8e8e8"/><rect x="11" y="7" width="3.6" height="5.2" rx="0.8" fill="#e8e8e8"/></g>
<text x="74.4" y="1067.2" font-size="9.5" fill="#111" text-anchor="start" font-weight="bold">B</text>
<text x="80.0" y="1070.2" font-size="7.5" fill="#111" text-anchor="start" font-weight="bold">W</text>
<text x="169.6" y="1067.2" font-size="9.5" fill="#111" text-anchor="start" font-weight="bold">B</text>
<text x="175.2" y="1070.2" font-size="7.5" fill="#111" text-anchor="start" font-weight="bold">W</text>
<rect x="962.5" y="999.5" width="39" height="77" rx="6.5" ry="6.5" fill="url(#gBtnT)" stroke="#625c57" stroke-width="1"/>
<rect x="966" y="1007" width="32" height="2.2" fill="#f03a62"/>
<rect x="1007.5" y="999.5" width="39" height="77" rx="6.5" ry="6.5" fill="url(#gBtnT)" stroke="#625c57" stroke-width="1"/>
<rect x="1011" y="1007" width="32" height="2.2" fill="#8adc28"/>
<rect x="1068.5" y="999.5" width="39" height="77" rx="6.5" ry="6.5" fill="url(#gBtnT)" stroke="#625c57" stroke-width="1"/>
<rect x="1072" y="1007" width="32" height="2.2" fill="#fa8c1e"/>
<rect x="1113.5" y="999.5" width="39" height="77" rx="6.5" ry="6.5" fill="url(#gBtnT)" stroke="#625c57" stroke-width="1"/>
<rect x="1117" y="1007" width="32" height="2.2" fill="#b8b8c8"/>
<rect x="1158.5" y="999.5" width="39" height="77" rx="6.5" ry="6.5" fill="url(#gBtnT)" stroke="#625c57" stroke-width="1"/>
<rect x="1162" y="1007" width="32" height="2.2" fill="#b45af0"/>
<rect x="1219.5" y="999.5" width="39" height="77" rx="6.5" ry="6.5" fill="url(#gBtnT)" stroke="#625c57" stroke-width="1"/>
<rect x="1223" y="1007" width="32" height="2.2" fill="#4a4a4c"/>
<text x="976.8" y="1049" font-size="21.5" fill="#e6e6e6" text-anchor="start" font-weight="normal" textLength="9.5" lengthAdjust="spacingAndGlyphs">3</text>
<text x="1021.4" y="1049" font-size="21.5" fill="#e6e6e6" text-anchor="start" font-weight="normal" textLength="10.6" lengthAdjust="spacingAndGlyphs">4</text>
<text x="1074.8" y="1031.7" font-size="15" fill="#e8e8e8" text-anchor="start" font-weight="normal" textLength="26.5" lengthAdjust="spacingAndGlyphs">Add</text>
<text x="1072.52" y="1047.7" font-size="15" fill="#e8e8e8" text-anchor="start" font-weight="normal" textLength="29.3" lengthAdjust="spacingAndGlyphs">New</text>
<text x="1070.48" y="1063.8" font-size="15" fill="#e8e8e8" text-anchor="start" font-weight="normal" textLength="34.1" lengthAdjust="spacingAndGlyphs">Math</text>
<text x="1119.8" y="1031.7" font-size="15" fill="#e8e8e8" text-anchor="start" font-weight="normal" textLength="26.5" lengthAdjust="spacingAndGlyphs">Add</text>
<text x="1117.52" y="1047.7" font-size="15" fill="#e8e8e8" text-anchor="start" font-weight="normal" textLength="29.3" lengthAdjust="spacingAndGlyphs">New</text>
<text x="1122.45" y="1063.8" font-size="15" fill="#e8e8e8" text-anchor="start" font-weight="normal" textLength="19.8" lengthAdjust="spacingAndGlyphs">Ref</text>
<text x="1164.8" y="1031.7" font-size="15" fill="#e8e8e8" text-anchor="start" font-weight="normal" textLength="26.5" lengthAdjust="spacingAndGlyphs">Add</text>
<text x="1162.52" y="1047.7" font-size="15" fill="#e8e8e8" text-anchor="start" font-weight="normal" textLength="29.3" lengthAdjust="spacingAndGlyphs">New</text>
<text x="1166.63" y="1063.8" font-size="15" fill="#e8e8e8" text-anchor="start" font-weight="normal" textLength="22.6" lengthAdjust="spacingAndGlyphs">Bus</text>
<text x="1222.83" y="1048" font-size="15" fill="#e8e8e8" text-anchor="start" font-weight="normal" textLength="32.2" lengthAdjust="spacingAndGlyphs">DVM</text>
<rect x="1057.0" y="999" width="1" height="78" fill="#5f5955"/>
<rect x="1208.0" y="999" width="1" height="78" fill="#5f5955"/>
<rect x="1269.0" y="999" width="1" height="78" fill="#5f5955"/>
<rect x="1811.0" y="999" width="1" height="78" fill="#5f5955"/>
<rect x="1280" y="1001" width="200" height="76" rx="5" fill="#000"/>
<rect x="1281" y="1002" width="198" height="74" rx="4" fill="#c8c8c8"/>
<path d="M1281 1021V1006Q1281 1002 1285 1002H1475Q1479 1002 1479 1006V1021Z" fill="url(#gHdr)"/>
<rect x="1281" y="1021" width="198" height="1.4" fill="#adadad"/>
<text x="1285.63" y="1015.8" font-size="15.5" fill="#f0f0f0" text-anchor="start" font-weight="normal" textLength="74.5" lengthAdjust="spacingAndGlyphs">Horizontal</text>
<text x="1285.5" y="1035" font-size="15" fill="#111" text-anchor="start" font-weight="normal" textLength="39.4" lengthAdjust="spacingAndGlyphs">2 s/div</text>
<text x="1285.5" y="1053.8" font-size="15" fill="#111" text-anchor="start" font-weight="normal" textLength="81.9" lengthAdjust="spacingAndGlyphs">SR: 62.5 kS/s</text>
<text x="1284.54" y="1073" font-size="15" fill="#111" text-anchor="start" font-weight="normal" textLength="89.2" lengthAdjust="spacingAndGlyphs">RL: 1.25 Mpts</text>
<text x="1391.3" y="1035" font-size="15" fill="#111" text-anchor="start" font-weight="normal" textLength="26.7" lengthAdjust="spacingAndGlyphs">20 s</text>
<text x="1391.55" y="1053.8" font-size="15" fill="#111" text-anchor="start" font-weight="normal" textLength="51.0" lengthAdjust="spacingAndGlyphs">16 µs/pt</text>
<text x="1405.8" y="1073" font-size="15" fill="#111" text-anchor="start" font-weight="normal" textLength="29.5" lengthAdjust="spacingAndGlyphs">20%</text>
<path d="M1391.4 1061.4H1399.6V1069.6H1397.2L1395.5 1072.6L1393.8 1069.6H1391.4Z" fill="#000" stroke="#f58a1f" stroke-width="1.2"/>
<path d="M1393.3 1063.2H1397.7V1064.6H1396.2V1068.6H1394.8V1064.6H1393.3Z" fill="#fff"/>
<rect x="1485" y="1001" width="160" height="76" rx="5" fill="#000"/>
<rect x="1486" y="1002" width="158" height="74" rx="4" fill="#c8c8c8"/>
<path d="M1486 1021V1006Q1486 1002 1490 1002H1640Q1644 1002 1644 1006V1021Z" fill="url(#gHdr)"/>
<rect x="1486" y="1021" width="158" height="1.4" fill="#adadad"/>
<text x="1491.2" y="1015.8" font-size="15.5" fill="#f0f0f0" text-anchor="start" font-weight="normal" textLength="49.0" lengthAdjust="spacingAndGlyphs">Trigger</text>
<rect x="1490.5" y="1023.5" width="29" height="15" rx="5.5" fill="#22d0d8" stroke="#000" stroke-width="1.2"/>
<text x="1501.7" y="1034.8" font-size="14" fill="#000" text-anchor="start" font-weight="normal" textLength="6.1" lengthAdjust="spacingAndGlyphs">2</text>
<path d="M1530.5 1034.5H1534L1542 1025.5H1546" fill="none" stroke="#2c2a78" stroke-width="1.2"/>
<text x="1556.82" y="1034.8" font-size="15" fill="#111" text-anchor="start" font-weight="normal" textLength="54.9" lengthAdjust="spacingAndGlyphs">1.01 mA</text>
<rect x="1650" y="1001" width="150" height="76" rx="5" fill="#000"/>
<rect x="1651" y="1002" width="148" height="74" rx="4" fill="#c8c8c8"/>
<path d="M1651 1021V1006Q1651 1002 1655 1002H1795Q1799 1002 1799 1006V1021Z" fill="url(#gHdr)"/>
<rect x="1651" y="1021" width="148" height="1.4" fill="#adadad"/>
<text x="1656.3" y="1015.9" font-size="15.5" fill="#f0f0f0" text-anchor="start" font-weight="normal" textLength="77.6" lengthAdjust="spacingAndGlyphs">Acquisition</text>
<text x="1655.8" y="1034.7" font-size="15" fill="#111" text-anchor="start" font-weight="normal" textLength="35.0" lengthAdjust="spacingAndGlyphs">Auto,</text>
<text x="1736.3" y="1034.7" font-size="15" fill="#111" text-anchor="start" font-weight="normal" textLength="49.5" lengthAdjust="spacingAndGlyphs">Analyze</text>
<text x="1654.86" y="1053.6" font-size="15" fill="#111" text-anchor="start" font-weight="normal" textLength="107.8" lengthAdjust="spacingAndGlyphs">High Res: 16 bits</text>
<text x="1655.8" y="1072.4" font-size="15" fill="#111" text-anchor="start" font-weight="normal" textLength="69.8" lengthAdjust="spacingAndGlyphs">Single: 1 /1</text>
<rect x="1822.5" y="999.5" width="89" height="35" rx="5.5" fill="#fa1e25" stroke="#5a4a4a" stroke-width="1"/>
<text x="1839.0" y="1019.9" font-size="14" fill="#fff" text-anchor="start" font-weight="bold" textLength="56.1" lengthAdjust="spacingAndGlyphs">Stopped</text>
<rect x="1822" y="1041" width="90" height="36" rx="4.5" fill="#c8c8c8"/>
<text x="1827.4" y="1054.6" font-size="15" fill="#111" text-anchor="start" font-weight="normal" textLength="79.5" lengthAdjust="spacingAndGlyphs">24 Jun 2024</text>
<text x="1829.6" y="1071.7" font-size="15" fill="#111" text-anchor="start" font-weight="normal" textLength="74.6" lengthAdjust="spacingAndGlyphs">4:57:18 PM</text>
</svg></body></html>
